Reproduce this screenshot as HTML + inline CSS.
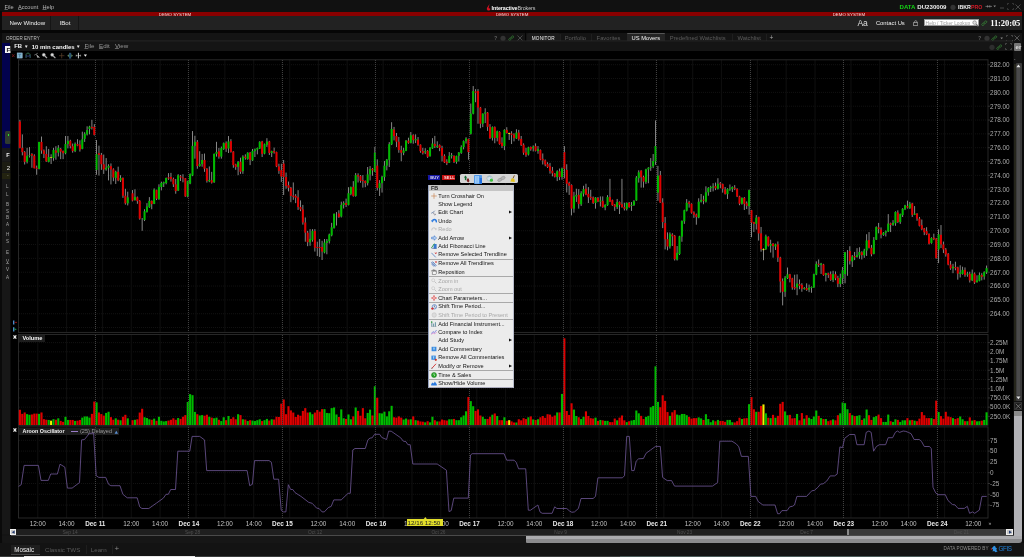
<!DOCTYPE html>
<html><head><meta charset="utf-8"><title>TWS</title>
<style>
*{box-sizing:border-box;margin:0;padding:0}
html,body{width:1024px;height:557px;overflow:hidden;background:#131313;font-family:"Liberation Sans",sans-serif;}
.a{position:absolute;white-space:nowrap}
#root{will-change:transform;position:relative;width:1024px;height:557px;overflow:hidden;background:#141414}
.t{position:absolute;white-space:nowrap;line-height:1;color:#ddd}
u{text-decoration:underline;text-underline-offset:0.4px;text-decoration-thickness:0.5px;text-decoration-color:rgba(200,200,200,0.45)}
.mi{position:absolute;left:0;width:100%;height:8.4px;font-size:5.58px;color:#111;line-height:8.4px;padding-left:9.4px;white-space:nowrap}
.mi.d{color:#a8a8a8}
.mi .ar{position:absolute;right:1px;top:0;font-size:4.2px;color:#111}
.sep{position:absolute;left:0;width:100%;height:0.9px;background:#a9a9a9}
.ic{position:absolute;left:2.3px;top:1.3px;width:6px;height:6px}
</style></head><body><div id="root">
<!-- top menu bar -->
<div class="a" style="left:0;top:0;width:1024px;height:11.7px;background:#111"></div>
<div class="t" style="left:4.5px;top:4.6px;font-size:5.6px;color:#b8b8b8"><u>F</u>ile</div>
<div class="t" style="left:18px;top:4.6px;font-size:5.6px;color:#b8b8b8"><u>A</u>ccount</div>
<div class="t" style="left:42.5px;top:4.6px;font-size:5.6px;color:#b8b8b8"><u>H</u>elp</div>
<!-- logo -->
<svg class="a" style="left:486px;top:3.6px" width="6" height="8" viewBox="0 0 6 8"><path d="M3.6 0 L1.2 3.4 Q0.2 5.2 1.4 6.2 Q2.6 7 3.8 6.2 Q4.8 5.2 4 4 L3 4.8 L2.6 3.6 Z" fill="#d81222"/></svg>
<div class="t" style="left:491.6px;top:5.8px;font-size:5.4px;color:#fff;letter-spacing:-0.1px"><b>Interactive</b><span style="color:#c8c8c8">Brokers</span></div>
<!-- right of menu -->
<div class="t" style="left:899.5px;top:4px;font-size:6.1px;color:#14d614;font-weight:bold">DATA</div>
<div class="t" style="left:917.3px;top:4px;font-size:6.1px;color:#f0f0f0;font-weight:bold">DU230009</div>
<svg class="a" style="left:950px;top:3.5px" width="6" height="6" viewBox="0 0 6 6"><circle cx="3" cy="3.3" r="2.6" fill="#333"/></svg>
<div class="t" style="left:958px;top:4.6px;font-size:5.3px;color:#f0f0f0;font-weight:bold">IBKR<span style="color:#d41a26">PRO</span></div>
<svg class="a" style="left:984.6px;top:4.2px" width="8" height="5" viewBox="0 0 8 5"><path d="M0.4 2.4 H7 M2.6 1.2 V3.6 M4.8 1.2 V3.6" stroke="#9a9a9a" stroke-width="0.6"/></svg>
<svg class="a" style="left:992.6px;top:5.4px" width="4" height="3" viewBox="0 0 4 3"><path d="M0.4 0.4 H3 L1.7 2.2 Z" fill="#888"/></svg>
<div class="a" style="left:1000px;top:7px;width:4px;height:2px;border:0.7px solid #2c2c2c"></div>
<svg class="a" style="left:1006.5px;top:3.3px" width="7" height="7" viewBox="0 0 7 7"><path d="M0.4 2 V0.4 H2 M5 0.4 H6.6 V2 M6.6 5 V6.6 H5 M2 6.6 H0.4 V5" stroke="#444" stroke-width="0.8" fill="none"/></svg>
<svg class="a" style="left:1015px;top:3.6px" width="6" height="6" viewBox="0 0 6 6"><path d="M0.5 0.5 L5.5 5.5 M5.5 0.5 L0.5 5.5" stroke="#555" stroke-width="0.8"/></svg>

<!-- red band -->
<div class="a" style="left:2px;top:11.6px;width:1020px;height:4.4px;background:#8a0000"></div>
<div class="t" style="left:158.8px;top:12.6px;font-size:4.4px;color:#f4dcdc;letter-spacing:0px">DEMO SYSTEM</div>
<div class="t" style="left:496px;top:12.6px;font-size:4.4px;color:#f4dcdc;letter-spacing:0px">DEMO SYSTEM</div>
<div class="t" style="left:832.7px;top:12.6px;font-size:4.4px;color:#f4dcdc;letter-spacing:0px">DEMO SYSTEM</div>

<!-- toolbar -->
<div class="a" style="left:2px;top:15.9px;width:1020.4px;height:14.2px;background:#222"></div>
<div class="a" style="left:50.4px;top:16.4px;width:0.9px;height:13.4px;background:#151515"></div>
<div class="a" style="left:78.2px;top:16.4px;width:0.9px;height:13.4px;background:#151515"></div>
<div class="t" style="left:9.5px;top:20.3px;font-size:6.1px;color:#eee">New Window</div>
<div class="t" style="left:59.6px;top:20.3px;font-size:6.1px;color:#eee">IBot</div>
<div class="t" style="left:857.6px;top:18.6px;font-size:8.6px;color:#ddd;letter-spacing:-0.3px">Aa</div>
<div class="t" style="left:875.9px;top:21px;font-size:5.85px;color:#eee">Contact Us</div>
<svg class="a" style="left:912.6px;top:19.6px" width="5.6" height="6.4" viewBox="0 0 7 8"><rect x="0.8" y="3.4" width="5.2" height="3.6" fill="none" stroke="#bbb" stroke-width="0.8"/><path d="M2 3.4 V2.2 A1.4 1.4 0 0 1 4.8 2.2 V3.4" fill="none" stroke="#bbb" stroke-width="0.8"/></svg>
<div class="a" style="left:924px;top:19.3px;width:55px;height:7px;background:#fff;border:0.6px solid #999"></div>
<div class="t" style="left:925.6px;top:21.5px;font-size:4.9px;color:#9a9a9a;letter-spacing:0px">Help / Ticker Lookup</div>
<svg class="a" style="left:972px;top:19.6px" width="7" height="7" viewBox="0 0 7 7"><circle cx="2.6" cy="2.6" r="1.8" fill="#ddd" stroke="#888" stroke-width="0.7"/><path d="M4 4 L6.3 6.3" stroke="#777" stroke-width="1.1"/></svg>
<svg class="a" style="left:981.3px;top:19.8px" width="6.6" height="6.6" viewBox="0 0 8 8"><g fill="none" stroke="#357c35" stroke-width="1"><rect x="0.8" y="4" width="3.4" height="2.4" rx="1.2" transform="rotate(-45 2.5 5.2)"/><rect x="3.8" y="1.4" width="3.4" height="2.4" rx="1.2" transform="rotate(-45 5.5 2.6)"/></g></svg>
<div class="t" style="left:990.2px;top:19px;font-size:8.55px;color:#fff;font-weight:bold;font-family:'Liberation Serif',serif;letter-spacing:-0.1px">11:20:05</div>

<div id="lblack" class="a" style="left:0;top:11.4px;width:1.7px;height:532px;background:#0a0a0a"></div>
<!-- gap -->
<div class="a" style="left:0;top:30.3px;width:1024px;height:2.5px;background:#060606"></div>

<!-- panel header row -->
<div class="a" style="left:2px;top:33px;width:522.6px;height:9px;background:#141414;border-radius:2px 2px 0 0"></div>
<div class="a" style="left:526px;top:33px;width:496px;height:9px;background:#141414;border-radius:2px 2px 0 0"></div>
<div class="t" style="left:6px;top:36.9px;font-size:4.5px;color:#c4c4c4;letter-spacing:0.1px">ORDER ENTRY</div>
<!-- left panel header icons -->
<div class="t" style="left:494.3px;top:36.6px;font-size:4.6px;color:#6a6a6a;font-weight:bold">?</div>
<svg class="a" style="left:500.4px;top:35px" width="6" height="6" viewBox="0 0 6 6"><circle cx="3" cy="3.3" r="2.6" fill="#333"/></svg>
<svg class="a" style="left:507.5px;top:35.2px" width="6.6" height="6.6" viewBox="0 0 8 8"><g fill="none" stroke="#357c35" stroke-width="0.95"><rect x="0.8" y="4" width="3.2" height="2.2" rx="1.1" transform="rotate(-45 2.4 5.1)"/><rect x="3.8" y="1.4" width="3.2" height="2.2" rx="1.1" transform="rotate(-45 5.4 2.5)"/></g></svg>
<svg class="a" style="left:517px;top:35px" width="6" height="6" viewBox="0 0 6 6"><path d="M0.5 0.5 L5.5 5.5 M5.5 0.5 L0.5 5.5" stroke="#6c6c6c" stroke-width="0.6"/></svg>
<div id="vgap" class="a" style="left:524.6px;top:30.3px;width:1.6px;height:11px;background:#040404"></div>
<!-- tabs -->
<div class="a" style="left:527px;top:33.2px;width:33px;height:8px;background:#1b1b1b;border-radius:2px 2px 0 0"></div>
<div class="t" style="left:531.8px;top:37.1px;font-size:4.7px;color:#f2f2f2;letter-spacing:0.14px">MONITOR</div>
<div class="a" style="left:560.3px;top:34px;width:0.7px;height:7px;background:#1f1f1f"></div>
<div class="t" style="left:564.7px;top:36.1px;font-size:5.8px;color:#5d5d5d">Portfolio</div>
<div class="a" style="left:591.3px;top:34px;width:0.7px;height:7px;background:#1f1f1f"></div>
<div class="t" style="left:596.6px;top:36.1px;font-size:5.8px;color:#5d5d5d">Favorites</div>
<div class="a" style="left:626.6px;top:32.6px;width:38.4px;height:8.6px;background:#242424;border-top:0.7px solid #555;border-radius:1px 1px 0 0"></div>
<div class="t" style="left:631.5px;top:36.1px;font-size:5.8px;color:#f4f4f4">US Movers</div>
<div class="t" style="left:669.8px;top:36.1px;font-size:5.8px;color:#5d5d5d">Predefined Watchlists</div>
<div class="a" style="left:731.6px;top:34px;width:0.7px;height:7px;background:#1f1f1f"></div>
<div class="t" style="left:737.5px;top:36.1px;font-size:5.8px;color:#5d5d5d">Watchlist</div>
<div class="a" style="left:766px;top:34px;width:0.7px;height:7px;background:#1f1f1f"></div>
<div class="t" style="left:769.6px;top:34.6px;font-size:6.6px;color:#aaa">+</div>
<!-- right panel header icons -->
<div class="t" style="left:978.2px;top:36.6px;font-size:4.6px;color:#6a6a6a;font-weight:bold">?</div>
<svg class="a" style="left:984.3px;top:35px" width="6" height="6" viewBox="0 0 6 6"><circle cx="3" cy="3.3" r="2.6" fill="#333"/></svg>
<svg class="a" style="left:991.4px;top:35.2px" width="6.6" height="6.6" viewBox="0 0 8 8"><g fill="none" stroke="#357c35" stroke-width="0.95"><rect x="0.8" y="4" width="3.2" height="2.2" rx="1.1" transform="rotate(-45 2.4 5.1)"/><rect x="3.8" y="1.4" width="3.2" height="2.2" rx="1.1" transform="rotate(-45 5.4 2.5)"/></g></svg>
<svg class="a" style="left:999.6px;top:37.2px" width="4" height="3" viewBox="0 0 4 3"><path d="M0.4 0.4 H3 L1.7 2.2 Z" fill="#888"/></svg>
<svg class="a" style="left:1005.5px;top:34.6px" width="7" height="7" viewBox="0 0 7 7"><path d="M0.4 2 V0.4 H2 M5 0.4 H6.6 V2 M6.6 5 V6.6 H5 M2 6.6 H0.4 V5" stroke="#555" stroke-width="0.8" fill="none"/></svg>
<svg class="a" style="left:1014px;top:35px" width="6" height="6" viewBox="0 0 6 6"><path d="M0.5 0.5 L5.5 5.5 M5.5 0.5 L0.5 5.5" stroke="#666" stroke-width="0.8"/></svg>

<!-- left blue strip & side fragments -->
<div class="a" style="left:2.2px;top:43.1px;width:8.3px;height:104.9px;background:#02024e"></div>
<div class="a" style="left:5px;top:45.6px;width:5.5px;height:7.7px;background:#f4f4f4"></div>
<div class="t" style="left:6.5px;top:46.6px;font-size:6.2px;color:#222;font-weight:bold">F</div>
<div class="a" style="left:4.6px;top:131px;width:6px;height:12.5px;background:#2f3b2f;border-radius:1.5px"></div>
<div class="a" style="left:7.8px;top:134.3px;width:1.7px;height:1.7px;background:#2ee02e"></div>
<div class="a" style="left:2px;top:148px;width:8.5px;height:386px;background:#171717"></div>
<div class="a" style="left:2px;top:149.6px;width:8.5px;height:11.2px;background:#1b1b1b"></div>
<div class="t" style="left:6.2px;top:152.6px;font-size:5.6px;color:#eee;font-weight:bold">F</div>
<div class="a" style="left:2px;top:162.2px;width:8.5px;height:10.3px;background:#1c1c12"></div>
<div class="t" style="left:6.8px;top:164.6px;font-size:6px;color:#eee">2</div>
<div class="a" style="left:2px;top:173px;width:8.5px;height:6px;background:#232310"></div>
<div class="t" style="left:7px;top:173.2px;font-size:5px;color:#887">-</div>
<div class="t" style="left:6px;top:185.2px;font-size:4.5px;color:#a4a4a4">L</div>
<div class="t" style="left:6px;top:192.7px;font-size:4.5px;color:#a4a4a4">L</div>
<div class="t" style="left:6px;top:202.7px;font-size:4.5px;color:#a4a4a4">B</div>
<div class="t" style="left:6px;top:209.7px;font-size:4.5px;color:#a4a4a4">S</div>
<div class="t" style="left:6px;top:216.2px;font-size:4.5px;color:#a4a4a4">B</div>
<div class="t" style="left:6px;top:223.2px;font-size:4.5px;color:#a4a4a4">A</div>
<div class="t" style="left:6px;top:232.7px;font-size:4.5px;color:#a4a4a4">H</div>
<div class="t" style="left:6px;top:239.7px;font-size:4.5px;color:#a4a4a4">S</div>
<div class="t" style="left:6px;top:250.7px;font-size:4.5px;color:#a4a4a4">E</div>
<div class="t" style="left:6px;top:260.2px;font-size:4.5px;color:#a4a4a4"><u>V</u></div>
<div class="t" style="left:6px;top:268.2px;font-size:4.5px;color:#a4a4a4">V</div>
<div class="t" style="left:6px;top:275.7px;font-size:4.5px;color:#a4a4a4">A</div>
<svg class="a" style="left:0;top:0" width="1024" height="557" viewBox="0 0 1024 557" shape-rendering="auto">
<rect x="10.5" y="41.5" width="1003" height="494.5" fill="#000"/>
<path d="M10.5 51 V43 Q10.5 41 12.5 41 H1011.5 Q1013.5 41 1013.5 43 V51 Z" fill="#151515"/>
<path d="M10.8 43.4 Q10.8 41 13 40.9 H1011 Q1013.2 41 1013.2 43.4" fill="none" stroke="#2a2a2a" stroke-width="0.8"/>
<g fill="none"><path d="M19 313.73 H988.0" stroke="#141414" stroke-width="0.9" stroke-dasharray="1 1"/><path d="M988.0 313.73 H989.8" stroke="#555" stroke-width="0.7"/><path d="M19 299.90 H988.0" stroke="#141414" stroke-width="0.9" stroke-dasharray="1 1"/><path d="M988.0 299.90 H989.8" stroke="#555" stroke-width="0.7"/><path d="M19 286.06 H988.0" stroke="#141414" stroke-width="0.9" stroke-dasharray="1 1"/><path d="M988.0 286.06 H989.8" stroke="#555" stroke-width="0.7"/><path d="M19 272.23 H988.0" stroke="#141414" stroke-width="0.9" stroke-dasharray="1 1"/><path d="M988.0 272.23 H989.8" stroke="#555" stroke-width="0.7"/><path d="M19 258.39 H988.0" stroke="#141414" stroke-width="0.9" stroke-dasharray="1 1"/><path d="M988.0 258.39 H989.8" stroke="#555" stroke-width="0.7"/><path d="M19 244.56 H988.0" stroke="#141414" stroke-width="0.9" stroke-dasharray="1 1"/><path d="M988.0 244.56 H989.8" stroke="#555" stroke-width="0.7"/><path d="M19 230.72 H988.0" stroke="#141414" stroke-width="0.9" stroke-dasharray="1 1"/><path d="M988.0 230.72 H989.8" stroke="#555" stroke-width="0.7"/><path d="M19 216.88 H988.0" stroke="#141414" stroke-width="0.9" stroke-dasharray="1 1"/><path d="M988.0 216.88 H989.8" stroke="#555" stroke-width="0.7"/><path d="M19 203.05 H988.0" stroke="#141414" stroke-width="0.9" stroke-dasharray="1 1"/><path d="M988.0 203.05 H989.8" stroke="#555" stroke-width="0.7"/><path d="M19 189.22 H988.0" stroke="#141414" stroke-width="0.9" stroke-dasharray="1 1"/><path d="M988.0 189.22 H989.8" stroke="#555" stroke-width="0.7"/><path d="M19 175.38 H988.0" stroke="#141414" stroke-width="0.9" stroke-dasharray="1 1"/><path d="M988.0 175.38 H989.8" stroke="#555" stroke-width="0.7"/><path d="M19 161.55 H988.0" stroke="#141414" stroke-width="0.9" stroke-dasharray="1 1"/><path d="M988.0 161.55 H989.8" stroke="#555" stroke-width="0.7"/><path d="M19 147.71 H988.0" stroke="#141414" stroke-width="0.9" stroke-dasharray="1 1"/><path d="M988.0 147.71 H989.8" stroke="#555" stroke-width="0.7"/><path d="M19 133.88 H988.0" stroke="#141414" stroke-width="0.9" stroke-dasharray="1 1"/><path d="M988.0 133.88 H989.8" stroke="#555" stroke-width="0.7"/><path d="M19 120.04 H988.0" stroke="#141414" stroke-width="0.9" stroke-dasharray="1 1"/><path d="M988.0 120.04 H989.8" stroke="#555" stroke-width="0.7"/><path d="M19 106.21 H988.0" stroke="#141414" stroke-width="0.9" stroke-dasharray="1 1"/><path d="M988.0 106.21 H989.8" stroke="#555" stroke-width="0.7"/><path d="M19 92.37 H988.0" stroke="#141414" stroke-width="0.9" stroke-dasharray="1 1"/><path d="M988.0 92.37 H989.8" stroke="#555" stroke-width="0.7"/><path d="M19 78.53 H988.0" stroke="#141414" stroke-width="0.9" stroke-dasharray="1 1"/><path d="M988.0 78.53 H989.8" stroke="#555" stroke-width="0.7"/><path d="M19 64.70 H988.0" stroke="#141414" stroke-width="0.9" stroke-dasharray="1 1"/><path d="M988.0 64.70 H989.8" stroke="#555" stroke-width="0.7"/><path d="M19 327.56 H988.0" stroke="#141414" stroke-width="0.9" stroke-dasharray="1 1"/><path d="M19 416.38 H988.0" stroke="#141414" stroke-width="0.9" stroke-dasharray="1 1"/><path d="M988.0 416.38 H989.8" stroke="#555" stroke-width="0.7"/><path d="M19 407.16 H988.0" stroke="#141414" stroke-width="0.9" stroke-dasharray="1 1"/><path d="M988.0 407.16 H989.8" stroke="#555" stroke-width="0.7"/><path d="M19 397.94 H988.0" stroke="#141414" stroke-width="0.9" stroke-dasharray="1 1"/><path d="M988.0 397.94 H989.8" stroke="#555" stroke-width="0.7"/><path d="M19 388.72 H988.0" stroke="#141414" stroke-width="0.9" stroke-dasharray="1 1"/><path d="M988.0 388.72 H989.8" stroke="#555" stroke-width="0.7"/><path d="M19 379.50 H988.0" stroke="#141414" stroke-width="0.9" stroke-dasharray="1 1"/><path d="M988.0 379.50 H989.8" stroke="#555" stroke-width="0.7"/><path d="M19 370.28 H988.0" stroke="#141414" stroke-width="0.9" stroke-dasharray="1 1"/><path d="M988.0 370.28 H989.8" stroke="#555" stroke-width="0.7"/><path d="M19 361.06 H988.0" stroke="#141414" stroke-width="0.9" stroke-dasharray="1 1"/><path d="M988.0 361.06 H989.8" stroke="#555" stroke-width="0.7"/><path d="M19 351.84 H988.0" stroke="#141414" stroke-width="0.9" stroke-dasharray="1 1"/><path d="M988.0 351.84 H989.8" stroke="#555" stroke-width="0.7"/><path d="M19 342.62 H988.0" stroke="#141414" stroke-width="0.9" stroke-dasharray="1 1"/><path d="M988.0 342.62 H989.8" stroke="#555" stroke-width="0.7"/><path d="M19 440.30 H988.0" stroke="#141414" stroke-width="0.9" stroke-dasharray="1 1"/><path d="M988.0 440.30 H989.8" stroke="#555" stroke-width="0.7"/><path d="M19 451.10 H988.0" stroke="#141414" stroke-width="0.9" stroke-dasharray="1 1"/><path d="M988.0 451.10 H989.8" stroke="#555" stroke-width="0.7"/><path d="M19 461.90 H988.0" stroke="#141414" stroke-width="0.9" stroke-dasharray="1 1"/><path d="M988.0 461.90 H989.8" stroke="#555" stroke-width="0.7"/><path d="M19 472.70 H988.0" stroke="#141414" stroke-width="0.9" stroke-dasharray="1 1"/><path d="M988.0 472.70 H989.8" stroke="#555" stroke-width="0.7"/><path d="M19 483.50 H988.0" stroke="#141414" stroke-width="0.9" stroke-dasharray="1 1"/><path d="M988.0 483.50 H989.8" stroke="#555" stroke-width="0.7"/><path d="M19 494.30 H988.0" stroke="#141414" stroke-width="0.9" stroke-dasharray="1 1"/><path d="M988.0 494.30 H989.8" stroke="#555" stroke-width="0.7"/><path d="M19 505.10 H988.0" stroke="#141414" stroke-width="0.9" stroke-dasharray="1 1"/><path d="M988.0 505.10 H989.8" stroke="#555" stroke-width="0.7"/><path d="M37.74 59.8 V332.4" stroke="#0d0d0d" stroke-width="1.2"/><path d="M66.54 59.8 V332.4" stroke="#0d0d0d" stroke-width="1.2"/><path d="M102.50 59.8 V332.4" stroke="#0d0d0d" stroke-width="1.2"/><path d="M131.30 59.8 V332.4" stroke="#0d0d0d" stroke-width="1.2"/><path d="M160.10 59.8 V332.4" stroke="#0d0d0d" stroke-width="1.2"/><path d="M196.06 59.8 V332.4" stroke="#0d0d0d" stroke-width="1.2"/><path d="M224.86 59.8 V332.4" stroke="#0d0d0d" stroke-width="1.2"/><path d="M253.66 59.8 V332.4" stroke="#0d0d0d" stroke-width="1.2"/><path d="M289.62 59.8 V332.4" stroke="#0d0d0d" stroke-width="1.2"/><path d="M318.42 59.8 V332.4" stroke="#0d0d0d" stroke-width="1.2"/><path d="M347.22 59.8 V332.4" stroke="#0d0d0d" stroke-width="1.2"/><path d="M383.18 59.8 V332.4" stroke="#0d0d0d" stroke-width="1.2"/><path d="M411.98 59.8 V332.4" stroke="#0d0d0d" stroke-width="1.2"/><path d="M440.78 59.8 V332.4" stroke="#0d0d0d" stroke-width="1.2"/><path d="M476.74 59.8 V332.4" stroke="#0d0d0d" stroke-width="1.2"/><path d="M505.54 59.8 V332.4" stroke="#0d0d0d" stroke-width="1.2"/><path d="M534.34 59.8 V332.4" stroke="#0d0d0d" stroke-width="1.2"/><path d="M570.30 59.8 V332.4" stroke="#0d0d0d" stroke-width="1.2"/><path d="M599.10 59.8 V332.4" stroke="#0d0d0d" stroke-width="1.2"/><path d="M627.90 59.8 V332.4" stroke="#0d0d0d" stroke-width="1.2"/><path d="M663.86 59.8 V332.4" stroke="#0d0d0d" stroke-width="1.2"/><path d="M692.66 59.8 V332.4" stroke="#0d0d0d" stroke-width="1.2"/><path d="M721.46 59.8 V332.4" stroke="#0d0d0d" stroke-width="1.2"/><path d="M757.42 59.8 V332.4" stroke="#0d0d0d" stroke-width="1.2"/><path d="M786.22 59.8 V332.4" stroke="#0d0d0d" stroke-width="1.2"/><path d="M815.02 59.8 V332.4" stroke="#0d0d0d" stroke-width="1.2"/><path d="M850.98 59.8 V332.4" stroke="#0d0d0d" stroke-width="1.2"/><path d="M879.78 59.8 V332.4" stroke="#0d0d0d" stroke-width="1.2"/><path d="M908.58 59.8 V332.4" stroke="#0d0d0d" stroke-width="1.2"/><path d="M944.54 59.8 V332.4" stroke="#0d0d0d" stroke-width="1.2"/><path d="M973.34 59.8 V332.4" stroke="#0d0d0d" stroke-width="1.2"/><rect x="18.5" y="59.8" width="969.5" height="272.6" fill="none" stroke="#2c2c2c" stroke-width="0.9"/><path d="M37.74 334.5 V425.3" stroke="#0d0d0d" stroke-width="1.2"/><path d="M66.54 334.5 V425.3" stroke="#0d0d0d" stroke-width="1.2"/><path d="M102.50 334.5 V425.3" stroke="#0d0d0d" stroke-width="1.2"/><path d="M131.30 334.5 V425.3" stroke="#0d0d0d" stroke-width="1.2"/><path d="M160.10 334.5 V425.3" stroke="#0d0d0d" stroke-width="1.2"/><path d="M196.06 334.5 V425.3" stroke="#0d0d0d" stroke-width="1.2"/><path d="M224.86 334.5 V425.3" stroke="#0d0d0d" stroke-width="1.2"/><path d="M253.66 334.5 V425.3" stroke="#0d0d0d" stroke-width="1.2"/><path d="M289.62 334.5 V425.3" stroke="#0d0d0d" stroke-width="1.2"/><path d="M318.42 334.5 V425.3" stroke="#0d0d0d" stroke-width="1.2"/><path d="M347.22 334.5 V425.3" stroke="#0d0d0d" stroke-width="1.2"/><path d="M383.18 334.5 V425.3" stroke="#0d0d0d" stroke-width="1.2"/><path d="M411.98 334.5 V425.3" stroke="#0d0d0d" stroke-width="1.2"/><path d="M440.78 334.5 V425.3" stroke="#0d0d0d" stroke-width="1.2"/><path d="M476.74 334.5 V425.3" stroke="#0d0d0d" stroke-width="1.2"/><path d="M505.54 334.5 V425.3" stroke="#0d0d0d" stroke-width="1.2"/><path d="M534.34 334.5 V425.3" stroke="#0d0d0d" stroke-width="1.2"/><path d="M570.30 334.5 V425.3" stroke="#0d0d0d" stroke-width="1.2"/><path d="M599.10 334.5 V425.3" stroke="#0d0d0d" stroke-width="1.2"/><path d="M627.90 334.5 V425.3" stroke="#0d0d0d" stroke-width="1.2"/><path d="M663.86 334.5 V425.3" stroke="#0d0d0d" stroke-width="1.2"/><path d="M692.66 334.5 V425.3" stroke="#0d0d0d" stroke-width="1.2"/><path d="M721.46 334.5 V425.3" stroke="#0d0d0d" stroke-width="1.2"/><path d="M757.42 334.5 V425.3" stroke="#0d0d0d" stroke-width="1.2"/><path d="M786.22 334.5 V425.3" stroke="#0d0d0d" stroke-width="1.2"/><path d="M815.02 334.5 V425.3" stroke="#0d0d0d" stroke-width="1.2"/><path d="M850.98 334.5 V425.3" stroke="#0d0d0d" stroke-width="1.2"/><path d="M879.78 334.5 V425.3" stroke="#0d0d0d" stroke-width="1.2"/><path d="M908.58 334.5 V425.3" stroke="#0d0d0d" stroke-width="1.2"/><path d="M944.54 334.5 V425.3" stroke="#0d0d0d" stroke-width="1.2"/><path d="M973.34 334.5 V425.3" stroke="#0d0d0d" stroke-width="1.2"/><rect x="18.5" y="334.5" width="969.5" height="90.8" fill="none" stroke="#2c2c2c" stroke-width="0.9"/><path d="M37.74 426.9 V518.0" stroke="#0d0d0d" stroke-width="1.2"/><path d="M66.54 426.9 V518.0" stroke="#0d0d0d" stroke-width="1.2"/><path d="M102.50 426.9 V518.0" stroke="#0d0d0d" stroke-width="1.2"/><path d="M131.30 426.9 V518.0" stroke="#0d0d0d" stroke-width="1.2"/><path d="M160.10 426.9 V518.0" stroke="#0d0d0d" stroke-width="1.2"/><path d="M196.06 426.9 V518.0" stroke="#0d0d0d" stroke-width="1.2"/><path d="M224.86 426.9 V518.0" stroke="#0d0d0d" stroke-width="1.2"/><path d="M253.66 426.9 V518.0" stroke="#0d0d0d" stroke-width="1.2"/><path d="M289.62 426.9 V518.0" stroke="#0d0d0d" stroke-width="1.2"/><path d="M318.42 426.9 V518.0" stroke="#0d0d0d" stroke-width="1.2"/><path d="M347.22 426.9 V518.0" stroke="#0d0d0d" stroke-width="1.2"/><path d="M383.18 426.9 V518.0" stroke="#0d0d0d" stroke-width="1.2"/><path d="M411.98 426.9 V518.0" stroke="#0d0d0d" stroke-width="1.2"/><path d="M440.78 426.9 V518.0" stroke="#0d0d0d" stroke-width="1.2"/><path d="M476.74 426.9 V518.0" stroke="#0d0d0d" stroke-width="1.2"/><path d="M505.54 426.9 V518.0" stroke="#0d0d0d" stroke-width="1.2"/><path d="M534.34 426.9 V518.0" stroke="#0d0d0d" stroke-width="1.2"/><path d="M570.30 426.9 V518.0" stroke="#0d0d0d" stroke-width="1.2"/><path d="M599.10 426.9 V518.0" stroke="#0d0d0d" stroke-width="1.2"/><path d="M627.90 426.9 V518.0" stroke="#0d0d0d" stroke-width="1.2"/><path d="M663.86 426.9 V518.0" stroke="#0d0d0d" stroke-width="1.2"/><path d="M692.66 426.9 V518.0" stroke="#0d0d0d" stroke-width="1.2"/><path d="M721.46 426.9 V518.0" stroke="#0d0d0d" stroke-width="1.2"/><path d="M757.42 426.9 V518.0" stroke="#0d0d0d" stroke-width="1.2"/><path d="M786.22 426.9 V518.0" stroke="#0d0d0d" stroke-width="1.2"/><path d="M815.02 426.9 V518.0" stroke="#0d0d0d" stroke-width="1.2"/><path d="M850.98 426.9 V518.0" stroke="#0d0d0d" stroke-width="1.2"/><path d="M879.78 426.9 V518.0" stroke="#0d0d0d" stroke-width="1.2"/><path d="M908.58 426.9 V518.0" stroke="#0d0d0d" stroke-width="1.2"/><path d="M944.54 426.9 V518.0" stroke="#0d0d0d" stroke-width="1.2"/><path d="M973.34 426.9 V518.0" stroke="#0d0d0d" stroke-width="1.2"/><rect x="18.5" y="426.9" width="969.5" height="91.1" fill="none" stroke="#2c2c2c" stroke-width="0.9"/></g>
</svg>
<!-- volume panel label -->
<svg class="a" style="left:11.5px;top:334.4px" width="6" height="6" viewBox="0 0 6 6"><path d="M1.5 1.4 L4.3 4.6 M4.3 1.4 L1.5 4.6" stroke="#eee" stroke-width="1.25"/></svg>
<div class="a" style="left:19.4px;top:335.2px;width:26px;height:7px;background:#1d1d1d"></div>
<div class="t" style="left:22.4px;top:336.2px;font-size:5.65px;color:#f4f4f4;font-weight:bold">Volume</div>

<!-- aroon label -->
<svg class="a" style="left:11.5px;top:427.4px" width="6" height="6" viewBox="0 0 6 6"><path d="M1.5 1.4 L4.3 4.6 M4.3 1.4 L1.5 4.6" stroke="#eee" stroke-width="1.25"/></svg>
<div class="a" style="left:19.4px;top:428.2px;width:99.3px;height:6.8px;background:#1d1d1d"></div>
<div class="t" style="left:22.6px;top:429.3px;font-size:5.35px;color:#f4f4f4;font-weight:bold">Aroon Oscillator</div>
<div class="a" style="left:67.5px;top:428.2px;width:51.2px;height:6.8px;background:#1d1d1d"></div>
<div class="a" style="left:71.4px;top:431.2px;width:6.6px;height:0.9px;background:#9a7cc8"></div>
<div class="t" style="left:80px;top:429.2px;font-size:5.6px;color:#999">(25) Delayed</div>
<svg class="a" style="left:114.4px;top:429.6px" width="5" height="5" viewBox="0 0 5 5"><path d="M2.3 0.8 L4 3.8 H0.6 Z" fill="#5a8fd0"/></svg>

<svg class="a" style="left:0;top:0" width="1024" height="557" viewBox="0 0 1024 557">
<g><rect x="19.45" y="119.84" width="0.9" height="28.53" fill="#949494"/><rect x="18.88" y="121.46" width="2.05" height="26.37" fill="#de0000"/><rect x="21.85" y="134.38" width="0.9" height="20.99" fill="#949494"/><rect x="21.27" y="147.83" width="2.05" height="4.31" fill="#de0000"/><rect x="24.25" y="151.06" width="0.9" height="13.46" fill="#949494"/><rect x="23.68" y="152.14" width="2.05" height="9.69" fill="#de0000"/><rect x="26.65" y="147.83" width="0.9" height="15.61" fill="#949494"/><rect x="26.07" y="155.90" width="2.05" height="5.92" fill="#00bb00"/><rect x="29.05" y="147.08" width="0.9" height="10.44" fill="#949494"/><rect x="28.48" y="155.04" width="2.05" height="0.70" fill="#00bb00"/><rect x="31.45" y="153.21" width="0.9" height="14.53" fill="#949494"/><rect x="30.88" y="153.97" width="2.05" height="1.72" fill="#de0000"/><rect x="33.85" y="154.29" width="0.9" height="13.99" fill="#949494"/><rect x="33.27" y="155.69" width="2.05" height="12.59" fill="#de0000"/><rect x="36.25" y="165.59" width="0.9" height="9.15" fill="#949494"/><rect x="35.68" y="167.74" width="2.05" height="1.08" fill="#de0000"/><rect x="38.65" y="141.91" width="0.9" height="27.45" fill="#949494"/><rect x="38.07" y="141.91" width="2.05" height="26.91" fill="#00bb00"/><rect x="41.05" y="136.53" width="0.9" height="17.22" fill="#949494"/><rect x="40.48" y="141.91" width="2.05" height="8.61" fill="#de0000"/><rect x="43.45" y="149.45" width="0.9" height="8.61" fill="#949494"/><rect x="42.88" y="150.52" width="2.05" height="3.44" fill="#de0000"/><rect x="45.85" y="146.22" width="0.9" height="15.61" fill="#949494"/><rect x="45.27" y="153.97" width="2.05" height="7.32" fill="#de0000"/><rect x="48.25" y="148.91" width="0.9" height="13.46" fill="#949494"/><rect x="47.67" y="156.98" width="2.05" height="4.84" fill="#00bb00"/><rect x="50.65" y="154.29" width="0.9" height="9.69" fill="#949494"/><rect x="50.07" y="157.20" width="2.05" height="0.70" fill="#f6ee00"/><rect x="53.05" y="147.83" width="0.9" height="12.92" fill="#949494"/><rect x="52.48" y="149.98" width="2.05" height="8.07" fill="#00bb00"/><rect x="55.45" y="146.22" width="0.9" height="13.46" fill="#949494"/><rect x="54.88" y="150.52" width="2.05" height="2.15" fill="#de0000"/><rect x="57.85" y="145.14" width="0.9" height="11.30" fill="#949494"/><rect x="57.27" y="147.83" width="2.05" height="4.84" fill="#00bb00"/><rect x="60.25" y="147.83" width="0.9" height="11.30" fill="#949494"/><rect x="59.67" y="148.91" width="2.05" height="2.69" fill="#de0000"/><rect x="62.65" y="150.52" width="0.9" height="8.61" fill="#949494"/><rect x="62.07" y="151.06" width="2.05" height="2.15" fill="#de0000"/><rect x="65.05" y="135.99" width="0.9" height="18.30" fill="#949494"/><rect x="64.47" y="144.06" width="2.05" height="9.15" fill="#00bb00"/><rect x="67.45" y="135.99" width="0.9" height="12.38" fill="#949494"/><rect x="66.88" y="140.83" width="2.05" height="3.23" fill="#00bb00"/><rect x="69.85" y="139.76" width="0.9" height="8.61" fill="#949494"/><rect x="69.27" y="140.83" width="2.05" height="5.38" fill="#de0000"/><rect x="72.25" y="143.53" width="0.9" height="9.15" fill="#949494"/><rect x="71.67" y="146.22" width="2.05" height="4.84" fill="#de0000"/><rect x="74.65" y="142.45" width="0.9" height="9.69" fill="#949494"/><rect x="74.07" y="143.85" width="2.05" height="7.21" fill="#00bb00"/><rect x="77.05" y="139.22" width="0.9" height="7.00" fill="#949494"/><rect x="76.47" y="144.06" width="2.05" height="1.61" fill="#de0000"/><rect x="79.45" y="140.30" width="0.9" height="11.30" fill="#949494"/><rect x="78.88" y="144.60" width="2.05" height="5.06" fill="#de0000"/><rect x="81.85" y="131.68" width="0.9" height="17.55" fill="#949494"/><rect x="81.27" y="139.22" width="2.05" height="9.69" fill="#00bb00"/><rect x="84.25" y="132.22" width="0.9" height="9.69" fill="#949494"/><rect x="83.67" y="133.84" width="2.05" height="5.06" fill="#00bb00"/><rect x="86.65" y="126.30" width="0.9" height="9.15" fill="#949494"/><rect x="86.07" y="130.07" width="2.05" height="4.31" fill="#00bb00"/><rect x="89.05" y="125.76" width="0.9" height="8.61" fill="#949494"/><rect x="88.47" y="126.63" width="2.05" height="2.37" fill="#00bb00"/><rect x="91.45" y="119.84" width="0.9" height="9.69" fill="#949494"/><rect x="90.88" y="126.84" width="2.05" height="1.08" fill="#de0000"/><rect x="93.85" y="124.15" width="0.9" height="11.30" fill="#949494"/><rect x="93.27" y="126.84" width="2.05" height="8.07" fill="#de0000"/><rect x="96.10" y="140.00" width="0.9" height="34.73" fill="#949494"/><rect x="95.52" y="154.22" width="2.05" height="15.67" fill="#00bb00"/><rect x="98.50" y="145.65" width="0.9" height="29.89" fill="#949494"/><rect x="97.92" y="153.25" width="2.05" height="1.62" fill="#de0000"/><rect x="100.90" y="152.92" width="0.9" height="16.96" fill="#949494"/><rect x="100.32" y="154.86" width="2.05" height="9.37" fill="#de0000"/><rect x="103.30" y="154.54" width="0.9" height="19.39" fill="#949494"/><rect x="102.72" y="164.23" width="2.05" height="5.17" fill="#de0000"/><rect x="105.70" y="158.09" width="0.9" height="12.60" fill="#949494"/><rect x="105.12" y="167.79" width="2.05" height="1.62" fill="#00bb00"/><rect x="108.10" y="164.23" width="0.9" height="16.16" fill="#949494"/><rect x="107.52" y="165.85" width="2.05" height="1.94" fill="#00bb00"/><rect x="110.50" y="163.42" width="0.9" height="21.00" fill="#949494"/><rect x="109.92" y="166.17" width="2.05" height="3.23" fill="#de0000"/><rect x="112.90" y="168.27" width="0.9" height="12.92" fill="#949494"/><rect x="112.32" y="169.40" width="2.05" height="8.08" fill="#de0000"/><rect x="115.30" y="170.69" width="0.9" height="13.25" fill="#949494"/><rect x="114.72" y="171.83" width="2.05" height="6.14" fill="#00bb00"/><rect x="117.70" y="166.66" width="0.9" height="14.54" fill="#949494"/><rect x="117.12" y="171.83" width="2.05" height="8.56" fill="#de0000"/><rect x="120.10" y="175.22" width="0.9" height="6.79" fill="#949494"/><rect x="119.52" y="177.96" width="2.05" height="2.42" fill="#00bb00"/><rect x="122.50" y="177.48" width="0.9" height="20.36" fill="#949494"/><rect x="121.92" y="177.96" width="2.05" height="17.77" fill="#de0000"/><rect x="124.90" y="188.79" width="0.9" height="15.83" fill="#949494"/><rect x="124.32" y="195.74" width="2.05" height="7.59" fill="#de0000"/><rect x="127.30" y="191.70" width="0.9" height="13.73" fill="#949494"/><rect x="126.72" y="197.35" width="2.05" height="5.98" fill="#00bb00"/><rect x="132.10" y="190.08" width="0.9" height="11.31" fill="#949494"/><rect x="131.53" y="193.31" width="2.05" height="7.27" fill="#de0000"/><rect x="134.50" y="189.27" width="0.9" height="11.31" fill="#949494"/><rect x="133.92" y="196.87" width="2.05" height="3.23" fill="#00bb00"/><rect x="136.90" y="196.54" width="0.9" height="7.27" fill="#949494"/><rect x="136.32" y="197.35" width="2.05" height="3.72" fill="#de0000"/><rect x="139.30" y="200.07" width="0.9" height="19.65" fill="#949494"/><rect x="138.72" y="200.87" width="2.05" height="17.77" fill="#de0000"/><rect x="141.70" y="217.97" width="0.9" height="12.79" fill="#949494"/><rect x="144.10" y="209.22" width="0.9" height="11.84" fill="#949494"/><rect x="143.53" y="211.24" width="2.05" height="8.75" fill="#00bb00"/><rect x="146.50" y="203.16" width="0.9" height="9.42" fill="#949494"/><rect x="145.92" y="206.53" width="2.05" height="5.38" fill="#00bb00"/><rect x="148.90" y="197.11" width="0.9" height="10.77" fill="#949494"/><rect x="148.32" y="200.87" width="2.05" height="6.33" fill="#00bb00"/><rect x="151.30" y="200.47" width="0.9" height="8.75" fill="#949494"/><rect x="150.72" y="200.87" width="2.05" height="3.23" fill="#de0000"/><rect x="153.70" y="188.36" width="0.9" height="15.75" fill="#949494"/><rect x="153.12" y="189.70" width="2.05" height="14.13" fill="#00bb00"/><rect x="156.10" y="189.70" width="0.9" height="10.36" fill="#949494"/><rect x="155.53" y="190.11" width="2.05" height="8.61" fill="#de0000"/><rect x="158.50" y="184.32" width="0.9" height="15.48" fill="#949494"/><rect x="157.92" y="187.01" width="2.05" height="12.11" fill="#00bb00"/><rect x="160.90" y="181.63" width="0.9" height="8.75" fill="#949494"/><rect x="160.32" y="182.97" width="2.05" height="4.04" fill="#00bb00"/><rect x="163.30" y="181.63" width="0.9" height="5.38" fill="#949494"/><rect x="162.72" y="182.30" width="2.05" height="1.35" fill="#00bb00"/><rect x="165.70" y="177.59" width="0.9" height="6.73" fill="#949494"/><rect x="165.12" y="177.99" width="2.05" height="4.98" fill="#00bb00"/><rect x="168.10" y="173.15" width="0.9" height="6.73" fill="#949494"/><rect x="167.53" y="177.32" width="2.05" height="1.21" fill="#de0000"/><rect x="170.50" y="172.88" width="0.9" height="8.75" fill="#949494"/><rect x="169.92" y="176.92" width="2.05" height="2.02" fill="#de0000"/><rect x="172.90" y="177.59" width="0.9" height="9.42" fill="#949494"/><rect x="172.32" y="178.94" width="2.05" height="5.38" fill="#de0000"/><rect x="175.30" y="178.94" width="0.9" height="14.80" fill="#949494"/><rect x="174.72" y="184.32" width="2.05" height="6.73" fill="#de0000"/><rect x="177.70" y="174.23" width="0.9" height="16.82" fill="#949494"/><rect x="177.12" y="175.30" width="2.05" height="15.34" fill="#00bb00"/><rect x="180.10" y="174.90" width="0.9" height="6.06" fill="#949494"/><rect x="179.53" y="176.24" width="2.05" height="1.35" fill="#de0000"/><rect x="182.50" y="174.23" width="0.9" height="8.08" fill="#949494"/><rect x="181.92" y="177.59" width="2.05" height="0.94" fill="#de0000"/><rect x="184.90" y="177.99" width="0.9" height="18.84" fill="#949494"/><rect x="184.32" y="178.26" width="2.05" height="18.17" fill="#de0000"/><rect x="187.30" y="180.69" width="0.9" height="16.69" fill="#949494"/><rect x="186.72" y="181.22" width="2.05" height="15.21" fill="#00bb00"/><rect x="189.66" y="173.45" width="0.9" height="10.77" fill="#949494"/><rect x="189.09" y="174.13" width="2.05" height="9.42" fill="#00bb00"/><rect x="192.06" y="131.06" width="0.9" height="45.09" fill="#949494"/><rect x="191.49" y="145.86" width="2.05" height="29.61" fill="#00bb00"/><rect x="194.46" y="135.77" width="0.9" height="22.88" fill="#949494"/><rect x="193.89" y="141.82" width="2.05" height="4.04" fill="#00bb00"/><rect x="196.86" y="140.07" width="0.9" height="28.67" fill="#949494"/><rect x="196.28" y="141.82" width="2.05" height="24.23" fill="#de0000"/><rect x="199.26" y="151.24" width="0.9" height="15.48" fill="#949494"/><rect x="198.69" y="164.03" width="2.05" height="2.02" fill="#00bb00"/><rect x="201.66" y="153.94" width="0.9" height="12.79" fill="#949494"/><rect x="201.09" y="159.99" width="2.05" height="4.04" fill="#00bb00"/><rect x="204.06" y="153.53" width="0.9" height="18.30" fill="#949494"/><rect x="203.49" y="159.99" width="2.05" height="8.75" fill="#de0000"/><rect x="206.46" y="168.07" width="0.9" height="14.54" fill="#949494"/><rect x="205.89" y="168.74" width="2.05" height="12.11" fill="#de0000"/><rect x="208.86" y="166.45" width="0.9" height="15.75" fill="#949494"/><rect x="208.28" y="179.91" width="2.05" height="1.35" fill="#00bb00"/><rect x="211.26" y="171.84" width="0.9" height="11.71" fill="#949494"/><rect x="210.69" y="180.18" width="2.05" height="2.42" fill="#de0000"/><rect x="213.66" y="153.53" width="0.9" height="29.34" fill="#949494"/><rect x="213.09" y="153.94" width="2.05" height="28.26" fill="#00bb00"/><rect x="216.06" y="141.82" width="0.9" height="14.80" fill="#949494"/><rect x="215.49" y="151.92" width="2.05" height="2.02" fill="#00bb00"/><rect x="218.46" y="147.88" width="0.9" height="10.77" fill="#949494"/><rect x="217.89" y="151.24" width="2.05" height="5.38" fill="#de0000"/><rect x="220.86" y="146.53" width="0.9" height="12.11" fill="#949494"/><rect x="220.28" y="148.15" width="2.05" height="8.48" fill="#00bb00"/><rect x="223.26" y="142.50" width="0.9" height="7.40" fill="#949494"/><rect x="222.69" y="143.17" width="2.05" height="5.79" fill="#00bb00"/><rect x="225.66" y="141.42" width="0.9" height="10.50" fill="#949494"/><rect x="225.09" y="143.17" width="2.05" height="5.38" fill="#de0000"/><rect x="228.06" y="136.04" width="0.9" height="16.96" fill="#949494"/><rect x="227.49" y="141.42" width="2.05" height="7.13" fill="#00bb00"/><rect x="230.46" y="139.13" width="0.9" height="13.46" fill="#949494"/><rect x="229.89" y="141.15" width="2.05" height="10.77" fill="#de0000"/><rect x="232.86" y="151.22" width="0.9" height="16.55" fill="#949494"/><rect x="232.28" y="151.63" width="2.05" height="13.46" fill="#de0000"/><rect x="235.26" y="163.74" width="0.9" height="6.06" fill="#949494"/><rect x="234.69" y="164.41" width="2.05" height="2.69" fill="#de0000"/><rect x="237.66" y="161.05" width="0.9" height="14.13" fill="#949494"/><rect x="237.09" y="161.99" width="2.05" height="4.85" fill="#00bb00"/><rect x="240.06" y="157.69" width="0.9" height="16.15" fill="#949494"/><rect x="239.49" y="161.72" width="2.05" height="10.09" fill="#de0000"/><rect x="242.46" y="155.26" width="0.9" height="18.57" fill="#949494"/><rect x="241.89" y="156.61" width="2.05" height="14.54" fill="#00bb00"/><rect x="244.86" y="154.32" width="0.9" height="5.38" fill="#949494"/><rect x="244.28" y="156.61" width="2.05" height="1.35" fill="#de0000"/><rect x="247.26" y="152.30" width="0.9" height="7.40" fill="#949494"/><rect x="246.69" y="152.71" width="2.05" height="6.33" fill="#00bb00"/><rect x="249.66" y="152.03" width="0.9" height="13.06" fill="#949494"/><rect x="249.09" y="152.71" width="2.05" height="7.40" fill="#de0000"/><rect x="252.06" y="148.94" width="0.9" height="12.11" fill="#949494"/><rect x="251.49" y="150.96" width="2.05" height="9.42" fill="#00bb00"/><rect x="254.46" y="148.53" width="0.9" height="8.48" fill="#949494"/><rect x="253.89" y="149.34" width="2.05" height="1.88" fill="#00bb00"/><rect x="256.86" y="147.59" width="0.9" height="6.73" fill="#949494"/><rect x="256.29" y="147.99" width="2.05" height="1.62" fill="#00bb00"/><rect x="259.26" y="141.27" width="0.9" height="7.67" fill="#949494"/><rect x="258.69" y="141.80" width="2.05" height="6.73" fill="#00bb00"/><rect x="261.66" y="140.86" width="0.9" height="16.15" fill="#949494"/><rect x="261.09" y="141.53" width="2.05" height="12.38" fill="#de0000"/><rect x="264.06" y="143.55" width="0.9" height="10.77" fill="#949494"/><rect x="263.49" y="144.23" width="2.05" height="9.42" fill="#00bb00"/><rect x="266.46" y="138.17" width="0.9" height="8.75" fill="#949494"/><rect x="265.89" y="141.53" width="2.05" height="3.36" fill="#00bb00"/><rect x="268.86" y="140.86" width="0.9" height="14.13" fill="#949494"/><rect x="268.29" y="141.53" width="2.05" height="11.44" fill="#de0000"/><rect x="271.26" y="150.69" width="0.9" height="6.33" fill="#949494"/><rect x="270.69" y="151.22" width="2.05" height="1.75" fill="#00bb00"/><rect x="273.66" y="147.59" width="0.9" height="6.06" fill="#949494"/><rect x="273.09" y="150.96" width="2.05" height="1.35" fill="#de0000"/><rect x="276.06" y="151.63" width="0.9" height="15.48" fill="#949494"/><rect x="275.49" y="152.03" width="2.05" height="14.40" fill="#de0000"/><rect x="278.46" y="163.74" width="0.9" height="10.09" fill="#949494"/><rect x="277.89" y="166.43" width="2.05" height="4.44" fill="#de0000"/><rect x="280.86" y="163.74" width="0.9" height="18.17" fill="#949494"/><rect x="280.29" y="170.07" width="2.05" height="6.46" fill="#de0000"/><rect x="283.22" y="160.00" width="0.9" height="35.01" fill="#949494"/><rect x="282.65" y="163.59" width="2.05" height="13.46" fill="#de0000"/><rect x="285.62" y="172.57" width="0.9" height="16.16" fill="#949494"/><rect x="285.05" y="177.06" width="2.05" height="8.98" fill="#de0000"/><rect x="288.02" y="181.54" width="0.9" height="9.87" fill="#949494"/><rect x="287.45" y="185.13" width="2.05" height="2.69" fill="#de0000"/><rect x="290.42" y="186.93" width="0.9" height="15.26" fill="#949494"/><rect x="289.85" y="187.83" width="2.05" height="8.08" fill="#de0000"/><rect x="292.82" y="182.44" width="0.9" height="17.41" fill="#949494"/><rect x="292.25" y="195.55" width="2.05" height="1.26" fill="#de0000"/><rect x="295.22" y="194.11" width="0.9" height="8.98" fill="#949494"/><rect x="294.65" y="195.91" width="2.05" height="1.80" fill="#de0000"/><rect x="297.62" y="190.16" width="0.9" height="19.75" fill="#949494"/><rect x="297.05" y="197.34" width="2.05" height="9.69" fill="#de0000"/><rect x="300.02" y="200.39" width="0.9" height="10.77" fill="#949494"/><rect x="299.45" y="207.04" width="2.05" height="2.33" fill="#de0000"/><rect x="302.42" y="204.88" width="0.9" height="19.75" fill="#949494"/><rect x="301.85" y="209.37" width="2.05" height="13.11" fill="#de0000"/><rect x="304.82" y="217.45" width="0.9" height="24.24" fill="#949494"/><rect x="304.25" y="222.48" width="2.05" height="10.23" fill="#de0000"/><rect x="307.22" y="230.92" width="0.9" height="15.26" fill="#949494"/><rect x="306.65" y="232.71" width="2.05" height="9.52" fill="#de0000"/><rect x="309.62" y="229.12" width="0.9" height="16.70" fill="#949494"/><rect x="309.05" y="238.99" width="2.05" height="3.23" fill="#00bb00"/><rect x="312.02" y="229.12" width="0.9" height="12.57" fill="#949494"/><rect x="311.45" y="230.92" width="2.05" height="8.98" fill="#00bb00"/><rect x="314.42" y="229.12" width="0.9" height="22.44" fill="#949494"/><rect x="313.85" y="230.92" width="2.05" height="16.70" fill="#de0000"/><rect x="316.82" y="241.69" width="0.9" height="14.36" fill="#949494"/><rect x="316.25" y="247.07" width="2.05" height="0.90" fill="#de0000"/><rect x="319.22" y="238.99" width="0.9" height="17.95" fill="#949494"/><rect x="318.65" y="247.07" width="2.05" height="0.90" fill="#de0000"/><rect x="321.62" y="240.79" width="0.9" height="19.21" fill="#949494"/><rect x="321.05" y="247.07" width="2.05" height="4.49" fill="#de0000"/><rect x="324.02" y="238.99" width="0.9" height="14.36" fill="#949494"/><rect x="323.45" y="242.59" width="2.05" height="9.87" fill="#00bb00"/><rect x="326.42" y="238.99" width="0.9" height="15.26" fill="#949494"/><rect x="325.85" y="240.79" width="2.05" height="2.15" fill="#00bb00"/><rect x="328.82" y="233.61" width="0.9" height="9.87" fill="#949494"/><rect x="328.25" y="234.51" width="2.05" height="6.64" fill="#00bb00"/><rect x="331.22" y="222.84" width="0.9" height="13.46" fill="#949494"/><rect x="330.65" y="227.32" width="2.05" height="8.08" fill="#00bb00"/><rect x="333.62" y="213.50" width="0.9" height="15.08" fill="#949494"/><rect x="333.05" y="213.86" width="2.05" height="14.00" fill="#00bb00"/><rect x="336.02" y="212.06" width="0.9" height="13.46" fill="#949494"/><rect x="338.42" y="210.27" width="0.9" height="7.54" fill="#949494"/><rect x="337.85" y="213.50" width="2.05" height="3.59" fill="#de0000"/><rect x="340.82" y="201.65" width="0.9" height="15.80" fill="#949494"/><rect x="340.25" y="204.88" width="2.05" height="11.67" fill="#00bb00"/><rect x="343.22" y="201.29" width="0.9" height="7.18" fill="#949494"/><rect x="342.65" y="203.09" width="2.05" height="1.80" fill="#00bb00"/><rect x="345.62" y="198.60" width="0.9" height="8.44" fill="#949494"/><rect x="345.05" y="203.09" width="2.05" height="1.80" fill="#de0000"/><rect x="348.02" y="187.20" width="0.9" height="18.17" fill="#949494"/><rect x="347.45" y="193.26" width="2.05" height="11.71" fill="#00bb00"/><rect x="350.42" y="186.53" width="0.9" height="8.75" fill="#949494"/><rect x="349.85" y="187.20" width="2.05" height="6.73" fill="#00bb00"/><rect x="352.82" y="181.14" width="0.9" height="15.48" fill="#949494"/><rect x="352.25" y="186.80" width="2.05" height="9.15" fill="#de0000"/><rect x="355.22" y="173.07" width="0.9" height="23.55" fill="#949494"/><rect x="354.65" y="175.09" width="2.05" height="20.86" fill="#00bb00"/><rect x="357.62" y="173.34" width="0.9" height="9.15" fill="#949494"/><rect x="357.05" y="175.09" width="2.05" height="1.35" fill="#de0000"/><rect x="360.02" y="175.09" width="0.9" height="7.67" fill="#949494"/><rect x="359.45" y="176.03" width="2.05" height="4.85" fill="#de0000"/><rect x="362.42" y="175.09" width="0.9" height="12.52" fill="#949494"/><rect x="361.85" y="180.07" width="2.05" height="1.08" fill="#de0000"/><rect x="364.82" y="180.47" width="0.9" height="6.73" fill="#949494"/><rect x="364.25" y="180.87" width="2.05" height="2.29" fill="#de0000"/><rect x="367.22" y="167.01" width="0.9" height="18.44" fill="#949494"/><rect x="366.65" y="174.41" width="2.05" height="8.75" fill="#00bb00"/><rect x="369.62" y="166.07" width="0.9" height="14.40" fill="#949494"/><rect x="369.05" y="169.03" width="2.05" height="5.38" fill="#00bb00"/><rect x="372.02" y="167.95" width="0.9" height="7.81" fill="#949494"/><rect x="371.45" y="168.76" width="2.05" height="1.62" fill="#de0000"/><rect x="374.42" y="146.82" width="0.9" height="25.17" fill="#949494"/><rect x="373.85" y="152.61" width="2.05" height="19.11" fill="#00bb00"/><rect x="376.78" y="159.34" width="0.9" height="31.22" fill="#949494"/><rect x="376.21" y="165.67" width="2.05" height="22.21" fill="#de0000"/><rect x="379.18" y="180.07" width="0.9" height="15.88" fill="#949494"/><rect x="378.61" y="183.16" width="2.05" height="4.98" fill="#00bb00"/><rect x="381.58" y="175.76" width="0.9" height="16.82" fill="#949494"/><rect x="381.01" y="176.84" width="2.05" height="6.33" fill="#00bb00"/><rect x="383.98" y="160.96" width="0.9" height="19.92" fill="#949494"/><rect x="383.41" y="165.67" width="2.05" height="11.44" fill="#00bb00"/><rect x="386.38" y="158.94" width="0.9" height="11.44" fill="#949494"/><rect x="385.81" y="159.61" width="2.05" height="6.06" fill="#00bb00"/><rect x="388.78" y="142.11" width="0.9" height="24.90" fill="#949494"/><rect x="388.21" y="144.13" width="2.05" height="15.75" fill="#00bb00"/><rect x="391.18" y="122.21" width="0.9" height="22.88" fill="#949494"/><rect x="390.61" y="128.94" width="2.05" height="15.48" fill="#00bb00"/><rect x="393.58" y="126.92" width="0.9" height="13.46" fill="#949494"/><rect x="393.01" y="129.61" width="2.05" height="6.46" fill="#de0000"/><rect x="395.98" y="132.97" width="0.9" height="14.13" fill="#949494"/><rect x="395.41" y="136.07" width="2.05" height="5.65" fill="#de0000"/><rect x="398.38" y="137.01" width="0.9" height="15.75" fill="#949494"/><rect x="397.81" y="141.72" width="2.05" height="8.34" fill="#de0000"/><rect x="400.78" y="145.76" width="0.9" height="15.48" fill="#949494"/><rect x="400.21" y="150.07" width="2.05" height="2.69" fill="#de0000"/><rect x="403.18" y="147.78" width="0.9" height="7.40" fill="#949494"/><rect x="402.61" y="150.47" width="2.05" height="2.29" fill="#00bb00"/><rect x="405.58" y="140.11" width="0.9" height="11.04" fill="#949494"/><rect x="405.01" y="140.65" width="2.05" height="10.23" fill="#00bb00"/><rect x="407.98" y="137.69" width="0.9" height="6.06" fill="#949494"/><rect x="407.41" y="140.65" width="2.05" height="2.15" fill="#de0000"/><rect x="410.38" y="132.03" width="0.9" height="11.31" fill="#949494"/><rect x="409.81" y="135.26" width="2.05" height="7.54" fill="#00bb00"/><rect x="412.78" y="134.32" width="0.9" height="9.42" fill="#949494"/><rect x="412.21" y="135.26" width="2.05" height="4.85" fill="#de0000"/><rect x="415.18" y="134.32" width="0.9" height="8.75" fill="#949494"/><rect x="414.61" y="139.03" width="2.05" height="1.35" fill="#00bb00"/><rect x="417.58" y="137.01" width="0.9" height="8.75" fill="#949494"/><rect x="417.01" y="139.70" width="2.05" height="4.98" fill="#de0000"/><rect x="419.98" y="144.41" width="0.9" height="8.34" fill="#949494"/><rect x="419.41" y="144.68" width="2.05" height="6.46" fill="#de0000"/><rect x="422.38" y="147.78" width="0.9" height="6.73" fill="#949494"/><rect x="421.81" y="151.14" width="2.05" height="2.02" fill="#de0000"/><rect x="424.78" y="148.18" width="0.9" height="5.92" fill="#949494"/><rect x="424.21" y="151.14" width="2.05" height="1.35" fill="#00bb00"/><rect x="427.18" y="150.07" width="0.9" height="7.81" fill="#949494"/><rect x="426.61" y="150.87" width="2.05" height="5.92" fill="#de0000"/><rect x="429.58" y="147.11" width="0.9" height="9.42" fill="#949494"/><rect x="429.01" y="147.78" width="2.05" height="8.48" fill="#00bb00"/><rect x="431.98" y="138.14" width="0.9" height="10.77" fill="#949494"/><rect x="431.41" y="143.53" width="2.05" height="4.94" fill="#00bb00"/><rect x="434.38" y="135.90" width="0.9" height="12.12" fill="#949494"/><rect x="433.81" y="143.98" width="2.05" height="2.24" fill="#de0000"/><rect x="436.78" y="141.28" width="0.9" height="6.73" fill="#949494"/><rect x="436.21" y="145.77" width="2.05" height="1.35" fill="#00bb00"/><rect x="439.18" y="144.43" width="0.9" height="6.73" fill="#949494"/><rect x="438.61" y="145.05" width="2.05" height="2.96" fill="#de0000"/><rect x="441.58" y="145.77" width="0.9" height="15.71" fill="#949494"/><rect x="441.01" y="148.02" width="2.05" height="7.81" fill="#de0000"/><rect x="443.98" y="154.30" width="0.9" height="8.71" fill="#949494"/><rect x="443.41" y="155.83" width="2.05" height="6.55" fill="#de0000"/><rect x="446.38" y="159.24" width="0.9" height="5.83" fill="#949494"/><rect x="445.81" y="161.75" width="2.05" height="1.53" fill="#de0000"/><rect x="448.78" y="152.06" width="0.9" height="10.95" fill="#949494"/><rect x="448.21" y="155.83" width="2.05" height="7.00" fill="#00bb00"/><rect x="451.18" y="152.95" width="0.9" height="5.57" fill="#949494"/><rect x="450.61" y="155.20" width="2.05" height="0.90" fill="#00bb00"/><rect x="453.58" y="155.47" width="0.9" height="7.54" fill="#949494"/><rect x="453.01" y="155.83" width="2.05" height="6.10" fill="#de0000"/><rect x="455.98" y="155.65" width="0.9" height="8.08" fill="#949494"/><rect x="455.41" y="156.10" width="2.05" height="5.83" fill="#00bb00"/><rect x="458.38" y="152.06" width="0.9" height="9.43" fill="#949494"/><rect x="457.81" y="152.50" width="2.05" height="3.32" fill="#00bb00"/><rect x="460.78" y="145.32" width="0.9" height="8.53" fill="#949494"/><rect x="460.21" y="147.12" width="2.05" height="5.83" fill="#00bb00"/><rect x="463.18" y="140.39" width="0.9" height="8.98" fill="#949494"/><rect x="462.61" y="141.10" width="2.05" height="6.01" fill="#00bb00"/><rect x="465.58" y="137.24" width="0.9" height="6.28" fill="#949494"/><rect x="465.01" y="138.59" width="2.05" height="2.51" fill="#00bb00"/><rect x="467.98" y="138.59" width="0.9" height="21.10" fill="#949494"/><rect x="467.41" y="139.04" width="2.05" height="13.02" fill="#de0000"/><rect x="470.34" y="103.55" width="0.9" height="30.96" fill="#949494"/><rect x="469.77" y="113.65" width="2.05" height="20.19" fill="#00bb00"/><rect x="472.74" y="86.06" width="0.9" height="28.26" fill="#949494"/><rect x="472.17" y="91.04" width="2.05" height="22.61" fill="#00bb00"/><rect x="475.14" y="89.15" width="0.9" height="13.06" fill="#949494"/><rect x="474.57" y="91.44" width="2.05" height="1.35" fill="#de0000"/><rect x="477.54" y="89.15" width="0.9" height="34.59" fill="#949494"/><rect x="476.97" y="91.04" width="2.05" height="16.55" fill="#de0000"/><rect x="479.94" y="106.92" width="0.9" height="21.27" fill="#949494"/><rect x="479.37" y="107.59" width="2.05" height="16.15" fill="#de0000"/><rect x="482.34" y="113.38" width="0.9" height="13.73" fill="#949494"/><rect x="481.77" y="113.65" width="2.05" height="10.09" fill="#00bb00"/><rect x="484.74" y="108.26" width="0.9" height="14.80" fill="#949494"/><rect x="484.17" y="112.30" width="2.05" height="1.35" fill="#00bb00"/><rect x="487.14" y="112.03" width="0.9" height="18.84" fill="#949494"/><rect x="486.57" y="112.57" width="2.05" height="14.27" fill="#de0000"/><rect x="489.54" y="124.15" width="0.9" height="14.80" fill="#949494"/><rect x="488.97" y="126.84" width="2.05" height="11.31" fill="#de0000"/><rect x="491.94" y="126.43" width="0.9" height="14.13" fill="#949494"/><rect x="491.37" y="127.11" width="2.05" height="10.77" fill="#00bb00"/><rect x="494.34" y="126.43" width="0.9" height="16.82" fill="#949494"/><rect x="493.77" y="127.11" width="2.05" height="10.77" fill="#de0000"/><rect x="496.74" y="130.57" width="0.9" height="10.77" fill="#949494"/><rect x="496.17" y="131.24" width="2.05" height="6.73" fill="#00bb00"/><rect x="499.14" y="131.24" width="0.9" height="13.46" fill="#949494"/><rect x="498.57" y="131.92" width="2.05" height="12.11" fill="#de0000"/><rect x="501.54" y="137.30" width="0.9" height="10.77" fill="#949494"/><rect x="500.97" y="142.69" width="2.05" height="3.36" fill="#de0000"/><rect x="503.94" y="129.23" width="0.9" height="20.86" fill="#949494"/><rect x="503.37" y="129.90" width="2.05" height="16.15" fill="#00bb00"/><rect x="506.34" y="127.21" width="0.9" height="6.33" fill="#949494"/><rect x="505.77" y="129.90" width="2.05" height="3.10" fill="#de0000"/><rect x="508.74" y="132.59" width="0.9" height="7.40" fill="#949494"/><rect x="508.17" y="132.99" width="2.05" height="0.94" fill="#f6ee00"/><rect x="511.14" y="131.24" width="0.9" height="12.79" fill="#949494"/><rect x="510.57" y="133.53" width="2.05" height="1.35" fill="#de0000"/><rect x="513.54" y="133.26" width="0.9" height="8.08" fill="#949494"/><rect x="512.97" y="134.61" width="2.05" height="3.36" fill="#de0000"/><rect x="515.94" y="129.23" width="0.9" height="9.69" fill="#949494"/><rect x="515.37" y="132.59" width="2.05" height="5.79" fill="#00bb00"/><rect x="518.34" y="129.90" width="0.9" height="10.77" fill="#949494"/><rect x="517.76" y="132.59" width="2.05" height="6.73" fill="#de0000"/><rect x="520.74" y="135.96" width="0.9" height="10.09" fill="#949494"/><rect x="520.17" y="138.92" width="2.05" height="6.19" fill="#de0000"/><rect x="523.14" y="143.36" width="0.9" height="11.44" fill="#949494"/><rect x="522.57" y="144.70" width="2.05" height="8.08" fill="#de0000"/><rect x="525.54" y="147.80" width="0.9" height="9.02" fill="#949494"/><rect x="524.97" y="152.38" width="2.05" height="2.69" fill="#de0000"/><rect x="527.94" y="146.72" width="0.9" height="8.75" fill="#949494"/><rect x="527.37" y="147.40" width="2.05" height="7.13" fill="#00bb00"/><rect x="530.34" y="146.45" width="0.9" height="4.31" fill="#949494"/><rect x="529.76" y="146.99" width="2.05" height="2.42" fill="#de0000"/><rect x="532.74" y="145.38" width="0.9" height="6.06" fill="#949494"/><rect x="532.17" y="146.72" width="2.05" height="1.62" fill="#00bb00"/><rect x="535.14" y="143.36" width="0.9" height="8.08" fill="#949494"/><rect x="534.57" y="146.05" width="2.05" height="4.71" fill="#de0000"/><rect x="537.54" y="146.05" width="0.9" height="7.67" fill="#949494"/><rect x="536.97" y="149.15" width="2.05" height="1.88" fill="#00bb00"/><rect x="539.94" y="149.42" width="0.9" height="10.77" fill="#949494"/><rect x="539.37" y="150.09" width="2.05" height="9.42" fill="#de0000"/><rect x="542.34" y="153.46" width="0.9" height="11.04" fill="#949494"/><rect x="541.76" y="158.84" width="2.05" height="1.62" fill="#de0000"/><rect x="544.74" y="159.52" width="0.9" height="6.73" fill="#949494"/><rect x="544.17" y="160.46" width="2.05" height="4.04" fill="#de0000"/><rect x="547.14" y="162.21" width="0.9" height="5.79" fill="#949494"/><rect x="546.57" y="163.96" width="2.05" height="2.96" fill="#de0000"/><rect x="549.54" y="162.88" width="0.9" height="10.77" fill="#949494"/><rect x="548.97" y="166.24" width="2.05" height="4.71" fill="#de0000"/><rect x="551.94" y="166.92" width="0.9" height="9.42" fill="#949494"/><rect x="551.37" y="170.69" width="2.05" height="2.69" fill="#de0000"/><rect x="554.34" y="172.97" width="0.9" height="4.44" fill="#949494"/><rect x="553.76" y="173.65" width="2.05" height="2.96" fill="#de0000"/><rect x="556.74" y="170.28" width="0.9" height="10.77" fill="#949494"/><rect x="556.17" y="171.22" width="2.05" height="5.79" fill="#00bb00"/><rect x="559.14" y="168.53" width="0.9" height="11.57" fill="#949494"/><rect x="558.57" y="171.22" width="2.05" height="5.79" fill="#de0000"/><rect x="561.54" y="167.59" width="0.9" height="12.11" fill="#949494"/><rect x="560.97" y="168.53" width="2.05" height="8.48" fill="#00bb00"/><rect x="563.90" y="146.06" width="0.9" height="32.30" fill="#949494"/><rect x="563.33" y="152.11" width="2.05" height="16.82" fill="#de0000"/><rect x="566.30" y="164.23" width="0.9" height="28.26" fill="#949494"/><rect x="565.73" y="169.88" width="2.05" height="13.86" fill="#de0000"/><rect x="568.70" y="181.72" width="0.9" height="13.19" fill="#949494"/><rect x="568.12" y="183.07" width="2.05" height="2.69" fill="#de0000"/><rect x="571.10" y="184.41" width="0.9" height="30.96" fill="#949494"/><rect x="570.53" y="185.09" width="2.05" height="23.55" fill="#de0000"/><rect x="573.50" y="191.82" width="0.9" height="20.86" fill="#949494"/><rect x="572.93" y="196.26" width="2.05" height="12.38" fill="#00bb00"/><rect x="575.90" y="188.72" width="0.9" height="13.19" fill="#949494"/><rect x="575.33" y="194.91" width="2.05" height="1.62" fill="#00bb00"/><rect x="578.30" y="189.13" width="0.9" height="19.52" fill="#949494"/><rect x="577.73" y="194.91" width="2.05" height="9.02" fill="#de0000"/><rect x="580.70" y="191.14" width="0.9" height="14.80" fill="#949494"/><rect x="580.12" y="193.16" width="2.05" height="11.17" fill="#00bb00"/><rect x="583.10" y="185.76" width="0.9" height="10.77" fill="#949494"/><rect x="582.53" y="189.13" width="2.05" height="4.44" fill="#00bb00"/><rect x="585.50" y="183.74" width="0.9" height="11.44" fill="#949494"/><rect x="584.93" y="188.72" width="2.05" height="5.79" fill="#de0000"/><rect x="587.90" y="187.11" width="0.9" height="15.88" fill="#949494"/><rect x="587.33" y="193.84" width="2.05" height="3.36" fill="#de0000"/><rect x="590.30" y="189.80" width="0.9" height="10.09" fill="#949494"/><rect x="589.73" y="196.80" width="2.05" height="1.08" fill="#de0000"/><rect x="592.70" y="196.53" width="0.9" height="7.40" fill="#949494"/><rect x="592.12" y="197.60" width="2.05" height="5.38" fill="#de0000"/><rect x="595.10" y="197.20" width="0.9" height="11.44" fill="#949494"/><rect x="594.53" y="197.60" width="2.05" height="5.38" fill="#00bb00"/><rect x="597.50" y="197.05" width="0.9" height="5.03" fill="#949494"/><rect x="596.93" y="197.93" width="2.05" height="3.52" fill="#de0000"/><rect x="599.90" y="196.42" width="0.9" height="10.05" fill="#949494"/><rect x="599.33" y="200.44" width="2.05" height="1.26" fill="#00bb00"/><rect x="602.30" y="196.42" width="0.9" height="11.31" fill="#949494"/><rect x="601.73" y="200.82" width="2.05" height="6.28" fill="#de0000"/><rect x="604.70" y="204.21" width="0.9" height="6.03" fill="#949494"/><rect x="604.12" y="204.96" width="2.05" height="2.51" fill="#00bb00"/><rect x="607.10" y="195.16" width="0.9" height="10.68" fill="#949494"/><rect x="606.53" y="197.05" width="2.05" height="8.17" fill="#00bb00"/><rect x="609.50" y="178.82" width="0.9" height="23.25" fill="#949494"/><rect x="608.93" y="197.05" width="2.05" height="4.40" fill="#de0000"/><rect x="611.90" y="199.56" width="0.9" height="6.28" fill="#949494"/><rect x="611.33" y="200.19" width="2.05" height="5.03" fill="#de0000"/><rect x="614.30" y="203.96" width="0.9" height="6.91" fill="#949494"/><rect x="613.73" y="204.59" width="2.05" height="2.14" fill="#de0000"/><rect x="616.70" y="198.93" width="0.9" height="10.05" fill="#949494"/><rect x="616.12" y="202.07" width="2.05" height="5.03" fill="#00bb00"/><rect x="619.10" y="201.45" width="0.9" height="12.57" fill="#949494"/><rect x="618.53" y="202.07" width="2.05" height="2.89" fill="#de0000"/><rect x="621.50" y="178.82" width="0.9" height="28.91" fill="#949494"/><rect x="620.93" y="204.21" width="2.05" height="2.89" fill="#de0000"/><rect x="623.90" y="202.70" width="0.9" height="7.79" fill="#949494"/><rect x="623.33" y="207.10" width="2.05" height="1.63" fill="#de0000"/><rect x="626.30" y="202.45" width="0.9" height="8.04" fill="#949494"/><rect x="625.73" y="202.95" width="2.05" height="6.03" fill="#00bb00"/><rect x="628.70" y="202.07" width="0.9" height="5.66" fill="#949494"/><rect x="628.12" y="202.70" width="2.05" height="4.40" fill="#de0000"/><rect x="631.10" y="202.07" width="0.9" height="8.80" fill="#949494"/><rect x="630.53" y="204.96" width="2.05" height="0.88" fill="#00bb00"/><rect x="633.50" y="200.19" width="0.9" height="5.66" fill="#949494"/><rect x="632.93" y="201.19" width="2.05" height="4.02" fill="#00bb00"/><rect x="635.90" y="176.06" width="0.9" height="24.76" fill="#949494"/><rect x="635.33" y="177.57" width="2.05" height="22.87" fill="#00bb00"/><rect x="638.30" y="170.28" width="0.9" height="12.32" fill="#949494"/><rect x="637.73" y="172.29" width="2.05" height="5.91" fill="#00bb00"/><rect x="640.70" y="170.28" width="0.9" height="17.34" fill="#949494"/><rect x="640.12" y="170.66" width="2.05" height="6.66" fill="#de0000"/><rect x="643.10" y="175.68" width="0.9" height="11.94" fill="#949494"/><rect x="642.53" y="176.94" width="2.05" height="4.65" fill="#de0000"/><rect x="645.50" y="168.77" width="0.9" height="15.08" fill="#949494"/><rect x="644.93" y="169.40" width="2.05" height="12.57" fill="#00bb00"/><rect x="647.90" y="167.26" width="0.9" height="15.96" fill="#949494"/><rect x="647.33" y="167.76" width="2.05" height="1.63" fill="#00bb00"/><rect x="650.30" y="158.07" width="0.9" height="12.79" fill="#949494"/><rect x="649.73" y="166.82" width="2.05" height="0.94" fill="#00bb00"/><rect x="652.70" y="154.03" width="0.9" height="14.13" fill="#949494"/><rect x="652.12" y="161.03" width="2.05" height="5.38" fill="#00bb00"/><rect x="655.10" y="120.38" width="0.9" height="44.41" fill="#949494"/><rect x="654.53" y="145.96" width="2.05" height="15.48" fill="#00bb00"/><rect x="657.46" y="165.85" width="0.9" height="34.97" fill="#949494"/><rect x="656.88" y="175.57" width="2.05" height="17.06" fill="#00bb00"/><rect x="659.86" y="170.97" width="0.9" height="31.89" fill="#949494"/><rect x="659.28" y="175.23" width="2.05" height="27.29" fill="#de0000"/><rect x="662.26" y="198.26" width="0.9" height="29.85" fill="#949494"/><rect x="661.68" y="202.52" width="2.05" height="19.61" fill="#de0000"/><rect x="664.66" y="217.02" width="0.9" height="32.41" fill="#949494"/><rect x="664.09" y="222.99" width="2.05" height="16.20" fill="#de0000"/><rect x="667.06" y="232.37" width="0.9" height="17.91" fill="#949494"/><rect x="666.49" y="239.19" width="2.05" height="7.33" fill="#de0000"/><rect x="669.46" y="232.37" width="0.9" height="16.20" fill="#949494"/><rect x="668.88" y="234.08" width="2.05" height="12.45" fill="#00bb00"/><rect x="671.86" y="233.22" width="0.9" height="12.79" fill="#949494"/><rect x="671.28" y="234.59" width="2.05" height="1.71" fill="#de0000"/><rect x="674.26" y="234.93" width="0.9" height="25.58" fill="#949494"/><rect x="673.68" y="235.78" width="2.05" height="23.37" fill="#de0000"/><rect x="676.66" y="246.02" width="0.9" height="14.50" fill="#949494"/><rect x="676.09" y="252.84" width="2.05" height="6.82" fill="#00bb00"/><rect x="679.06" y="235.78" width="0.9" height="19.27" fill="#949494"/><rect x="678.49" y="236.29" width="2.05" height="17.74" fill="#00bb00"/><rect x="681.46" y="220.43" width="0.9" height="21.32" fill="#949494"/><rect x="680.88" y="220.94" width="2.05" height="15.69" fill="#00bb00"/><rect x="683.86" y="209.69" width="0.9" height="14.16" fill="#949494"/><rect x="683.28" y="210.20" width="2.05" height="11.09" fill="#00bb00"/><rect x="686.26" y="199.11" width="0.9" height="12.28" fill="#949494"/><rect x="685.68" y="202.86" width="2.05" height="7.85" fill="#00bb00"/><rect x="688.66" y="200.82" width="0.9" height="6.82" fill="#949494"/><rect x="688.09" y="202.18" width="2.05" height="1.71" fill="#de0000"/><rect x="691.06" y="203.38" width="0.9" height="10.23" fill="#949494"/><rect x="690.49" y="203.89" width="2.05" height="8.87" fill="#de0000"/><rect x="693.46" y="211.39" width="0.9" height="6.48" fill="#949494"/><rect x="692.88" y="212.42" width="2.05" height="2.39" fill="#de0000"/><rect x="695.86" y="213.61" width="0.9" height="11.09" fill="#949494"/><rect x="695.28" y="214.46" width="2.05" height="2.56" fill="#de0000"/><rect x="698.26" y="198.26" width="0.9" height="19.96" fill="#949494"/><rect x="697.68" y="201.67" width="2.05" height="15.86" fill="#00bb00"/><rect x="700.66" y="194.00" width="0.9" height="8.53" fill="#949494"/><rect x="700.09" y="199.97" width="2.05" height="1.71" fill="#00bb00"/><rect x="703.06" y="195.70" width="0.9" height="8.53" fill="#949494"/><rect x="702.49" y="199.62" width="2.05" height="1.19" fill="#de0000"/><rect x="705.46" y="186.32" width="0.9" height="16.20" fill="#949494"/><rect x="704.88" y="192.29" width="2.05" height="9.38" fill="#00bb00"/><rect x="707.86" y="187.17" width="0.9" height="8.53" fill="#949494"/><rect x="707.28" y="188.03" width="2.05" height="4.26" fill="#00bb00"/><rect x="710.26" y="185.74" width="0.9" height="6.28" fill="#949494"/><rect x="709.68" y="186.99" width="2.05" height="1.26" fill="#00bb00"/><rect x="712.66" y="183.22" width="0.9" height="8.17" fill="#949494"/><rect x="712.09" y="186.36" width="2.05" height="1.01" fill="#00bb00"/><rect x="715.06" y="182.59" width="0.9" height="7.54" fill="#949494"/><rect x="714.49" y="186.11" width="2.05" height="2.14" fill="#de0000"/><rect x="717.46" y="178.20" width="0.9" height="11.31" fill="#949494"/><rect x="716.88" y="183.85" width="2.05" height="5.03" fill="#00bb00"/><rect x="719.86" y="181.97" width="0.9" height="6.28" fill="#949494"/><rect x="719.28" y="183.22" width="2.05" height="1.26" fill="#de0000"/><rect x="722.26" y="183.60" width="0.9" height="9.05" fill="#949494"/><rect x="721.68" y="184.10" width="2.05" height="4.78" fill="#de0000"/><rect x="724.66" y="186.99" width="0.9" height="7.54" fill="#949494"/><rect x="724.09" y="189.51" width="2.05" height="4.40" fill="#de0000"/><rect x="727.06" y="188.25" width="0.9" height="10.68" fill="#949494"/><rect x="726.49" y="188.88" width="2.05" height="5.28" fill="#00bb00"/><rect x="729.46" y="184.48" width="0.9" height="6.28" fill="#949494"/><rect x="728.88" y="188.63" width="2.05" height="0.88" fill="#00bb00"/><rect x="731.86" y="186.36" width="0.9" height="5.66" fill="#949494"/><rect x="731.28" y="186.99" width="2.05" height="1.89" fill="#00bb00"/><rect x="734.26" y="185.11" width="0.9" height="5.03" fill="#949494"/><rect x="733.68" y="187.62" width="2.05" height="1.26" fill="#de0000"/><rect x="736.66" y="188.25" width="0.9" height="8.80" fill="#949494"/><rect x="736.09" y="188.88" width="2.05" height="7.54" fill="#de0000"/><rect x="739.06" y="195.79" width="0.9" height="9.43" fill="#949494"/><rect x="738.49" y="196.42" width="2.05" height="7.29" fill="#de0000"/><rect x="741.46" y="197.42" width="0.9" height="7.16" fill="#949494"/><rect x="740.88" y="197.93" width="2.05" height="5.78" fill="#00bb00"/><rect x="743.86" y="197.05" width="0.9" height="12.94" fill="#949494"/><rect x="743.28" y="197.93" width="2.05" height="6.03" fill="#de0000"/><rect x="746.26" y="201.45" width="0.9" height="7.54" fill="#949494"/><rect x="745.68" y="203.33" width="2.05" height="2.51" fill="#de0000"/><rect x="748.66" y="189.51" width="0.9" height="25.14" fill="#949494"/><rect x="748.09" y="190.14" width="2.05" height="16.09" fill="#00bb00"/><rect x="751.02" y="209.88" width="0.9" height="27.29" fill="#949494"/><rect x="750.45" y="210.22" width="2.05" height="12.45" fill="#de0000"/><rect x="753.42" y="221.82" width="0.9" height="10.23" fill="#949494"/><rect x="752.85" y="222.16" width="2.05" height="1.71" fill="#de0000"/><rect x="755.82" y="215.00" width="0.9" height="14.50" fill="#949494"/><rect x="755.25" y="217.56" width="2.05" height="6.31" fill="#00bb00"/><rect x="758.22" y="216.71" width="0.9" height="23.88" fill="#949494"/><rect x="757.65" y="217.05" width="2.05" height="16.37" fill="#de0000"/><rect x="760.62" y="226.94" width="0.9" height="24.73" fill="#949494"/><rect x="760.05" y="233.42" width="2.05" height="15.69" fill="#de0000"/><rect x="763.02" y="248.26" width="0.9" height="11.94" fill="#949494"/><rect x="762.45" y="249.11" width="2.05" height="1.02" fill="#f6ee00"/><rect x="765.42" y="234.61" width="0.9" height="15.35" fill="#949494"/><rect x="764.85" y="236.32" width="2.05" height="12.79" fill="#00bb00"/><rect x="767.82" y="236.32" width="0.9" height="10.23" fill="#949494"/><rect x="767.25" y="236.83" width="2.05" height="8.87" fill="#de0000"/><rect x="770.22" y="239.73" width="0.9" height="12.79" fill="#949494"/><rect x="769.65" y="244.00" width="2.05" height="1.71" fill="#00bb00"/><rect x="772.62" y="243.14" width="0.9" height="14.50" fill="#949494"/><rect x="772.05" y="243.65" width="2.05" height="2.39" fill="#de0000"/><rect x="775.02" y="243.65" width="0.9" height="6.31" fill="#949494"/><rect x="774.45" y="244.34" width="2.05" height="2.22" fill="#00bb00"/><rect x="777.42" y="241.44" width="0.9" height="20.47" fill="#949494"/><rect x="776.85" y="244.34" width="2.05" height="13.30" fill="#de0000"/><rect x="779.82" y="256.79" width="0.9" height="35.82" fill="#949494"/><rect x="779.25" y="257.64" width="2.05" height="23.88" fill="#de0000"/><rect x="782.22" y="278.45" width="0.9" height="26.95" fill="#949494"/><rect x="781.65" y="281.18" width="2.05" height="10.57" fill="#de0000"/><rect x="784.62" y="276.06" width="0.9" height="20.81" fill="#949494"/><rect x="784.05" y="277.77" width="2.05" height="13.99" fill="#00bb00"/><rect x="787.02" y="267.53" width="0.9" height="11.43" fill="#949494"/><rect x="786.45" y="274.36" width="2.05" height="3.75" fill="#00bb00"/><rect x="789.42" y="273.84" width="0.9" height="8.53" fill="#949494"/><rect x="788.85" y="274.36" width="2.05" height="4.61" fill="#de0000"/><rect x="791.82" y="277.77" width="0.9" height="11.94" fill="#949494"/><rect x="791.25" y="278.45" width="2.05" height="9.04" fill="#de0000"/><rect x="794.22" y="274.70" width="0.9" height="15.01" fill="#949494"/><rect x="793.65" y="286.98" width="2.05" height="1.36" fill="#de0000"/><rect x="796.62" y="274.36" width="0.9" height="20.81" fill="#949494"/><rect x="796.05" y="283.57" width="2.05" height="3.92" fill="#00bb00"/><rect x="799.02" y="279.47" width="0.9" height="9.72" fill="#949494"/><rect x="798.45" y="284.08" width="2.05" height="1.71" fill="#de0000"/><rect x="801.42" y="283.22" width="0.9" height="8.53" fill="#949494"/><rect x="800.85" y="284.93" width="2.05" height="3.75" fill="#de0000"/><rect x="803.82" y="287.10" width="0.9" height="2.51" fill="#949494"/><rect x="803.25" y="287.98" width="2.05" height="1.01" fill="#00bb00"/><rect x="806.22" y="283.33" width="0.9" height="7.54" fill="#949494"/><rect x="805.65" y="287.98" width="2.05" height="2.01" fill="#de0000"/><rect x="808.62" y="284.59" width="0.9" height="7.54" fill="#949494"/><rect x="808.05" y="287.73" width="2.05" height="1.89" fill="#00bb00"/><rect x="811.02" y="286.47" width="0.9" height="6.28" fill="#949494"/><rect x="810.45" y="287.10" width="2.05" height="0.88" fill="#00bb00"/><rect x="813.42" y="273.65" width="0.9" height="14.08" fill="#949494"/><rect x="812.85" y="274.16" width="2.05" height="13.32" fill="#00bb00"/><rect x="815.82" y="261.34" width="0.9" height="13.82" fill="#949494"/><rect x="815.25" y="263.85" width="2.05" height="10.68" fill="#00bb00"/><rect x="818.22" y="259.45" width="0.9" height="7.54" fill="#949494"/><rect x="817.65" y="263.85" width="2.05" height="1.01" fill="#de0000"/><rect x="820.62" y="262.85" width="0.9" height="11.06" fill="#949494"/><rect x="820.05" y="263.60" width="2.05" height="1.26" fill="#00bb00"/><rect x="823.02" y="263.85" width="0.9" height="11.94" fill="#949494"/><rect x="822.45" y="264.48" width="2.05" height="10.68" fill="#de0000"/><rect x="825.42" y="272.90" width="0.9" height="8.55" fill="#949494"/><rect x="824.85" y="273.28" width="2.05" height="1.63" fill="#00bb00"/><rect x="827.82" y="272.65" width="0.9" height="5.28" fill="#949494"/><rect x="827.25" y="273.28" width="2.05" height="1.63" fill="#de0000"/><rect x="830.22" y="271.39" width="0.9" height="9.43" fill="#949494"/><rect x="829.65" y="274.16" width="2.05" height="5.78" fill="#de0000"/><rect x="832.62" y="270.76" width="0.9" height="11.31" fill="#949494"/><rect x="832.05" y="274.16" width="2.05" height="5.78" fill="#00bb00"/><rect x="835.02" y="271.39" width="0.9" height="8.80" fill="#949494"/><rect x="834.45" y="274.16" width="2.05" height="4.15" fill="#de0000"/><rect x="837.42" y="275.79" width="0.9" height="11.31" fill="#949494"/><rect x="836.85" y="277.93" width="2.05" height="5.78" fill="#de0000"/><rect x="839.82" y="273.65" width="0.9" height="13.45" fill="#949494"/><rect x="839.25" y="277.93" width="2.05" height="6.03" fill="#00bb00"/><rect x="842.22" y="266.99" width="0.9" height="16.97" fill="#949494"/><rect x="841.65" y="270.14" width="2.05" height="8.17" fill="#00bb00"/><rect x="844.58" y="251.91" width="0.9" height="31.42" fill="#949494"/><rect x="844.00" y="252.29" width="2.05" height="21.87" fill="#00bb00"/><rect x="846.98" y="250.03" width="0.9" height="25.76" fill="#949494"/><rect x="849.38" y="246.26" width="0.9" height="18.22" fill="#949494"/><rect x="848.80" y="251.03" width="2.05" height="10.05" fill="#de0000"/><rect x="851.78" y="255.05" width="0.9" height="11.94" fill="#949494"/><rect x="851.21" y="256.56" width="2.05" height="4.78" fill="#00bb00"/><rect x="854.18" y="251.91" width="0.9" height="8.17" fill="#949494"/><rect x="853.61" y="256.06" width="2.05" height="1.26" fill="#de0000"/><rect x="856.58" y="248.14" width="0.9" height="9.43" fill="#949494"/><rect x="856.00" y="255.05" width="2.05" height="1.89" fill="#00bb00"/><rect x="858.98" y="247.26" width="0.9" height="11.56" fill="#949494"/><rect x="858.40" y="251.91" width="2.05" height="3.39" fill="#00bb00"/><rect x="861.38" y="251.28" width="0.9" height="8.17" fill="#949494"/><rect x="860.80" y="252.29" width="2.05" height="2.76" fill="#de0000"/><rect x="863.78" y="248.79" width="0.9" height="9.05" fill="#949494"/><rect x="863.21" y="250.55" width="2.05" height="4.78" fill="#00bb00"/><rect x="866.18" y="234.21" width="0.9" height="21.74" fill="#949494"/><rect x="865.61" y="240.49" width="2.05" height="10.05" fill="#00bb00"/><rect x="868.58" y="232.07" width="0.9" height="16.34" fill="#949494"/><rect x="868.00" y="239.99" width="2.05" height="7.79" fill="#de0000"/><rect x="870.98" y="245.02" width="0.9" height="11.31" fill="#949494"/><rect x="870.40" y="247.78" width="2.05" height="6.54" fill="#de0000"/><rect x="873.38" y="237.10" width="0.9" height="17.22" fill="#949494"/><rect x="872.80" y="239.99" width="2.05" height="13.82" fill="#00bb00"/><rect x="875.78" y="226.42" width="0.9" height="13.57" fill="#949494"/><rect x="875.21" y="227.05" width="2.05" height="12.57" fill="#00bb00"/><rect x="878.18" y="222.90" width="0.9" height="10.43" fill="#949494"/><rect x="877.61" y="227.42" width="2.05" height="1.51" fill="#de0000"/><rect x="880.58" y="227.42" width="0.9" height="10.93" fill="#949494"/><rect x="880.00" y="229.56" width="2.05" height="5.03" fill="#de0000"/><rect x="882.98" y="232.07" width="0.9" height="3.77" fill="#949494"/><rect x="882.40" y="232.70" width="2.05" height="2.26" fill="#00bb00"/><rect x="885.38" y="230.44" width="0.9" height="6.03" fill="#949494"/><rect x="884.80" y="231.19" width="2.05" height="1.51" fill="#00bb00"/><rect x="887.78" y="214.10" width="0.9" height="17.97" fill="#949494"/><rect x="887.21" y="223.65" width="2.05" height="7.79" fill="#00bb00"/><rect x="890.18" y="222.65" width="0.9" height="9.43" fill="#949494"/><rect x="889.61" y="223.28" width="2.05" height="1.63" fill="#de0000"/><rect x="892.58" y="220.14" width="0.9" height="5.66" fill="#949494"/><rect x="892.00" y="222.90" width="2.05" height="2.01" fill="#00bb00"/><rect x="894.98" y="211.34" width="0.9" height="14.45" fill="#949494"/><rect x="894.40" y="211.97" width="2.05" height="11.31" fill="#00bb00"/><rect x="897.38" y="210.33" width="0.9" height="12.57" fill="#949494"/><rect x="896.80" y="212.59" width="2.05" height="9.43" fill="#de0000"/><rect x="899.78" y="213.60" width="0.9" height="10.31" fill="#949494"/><rect x="899.21" y="214.10" width="2.05" height="7.92" fill="#00bb00"/><rect x="902.18" y="208.20" width="0.9" height="8.80" fill="#949494"/><rect x="901.61" y="208.82" width="2.05" height="6.28" fill="#00bb00"/><rect x="904.58" y="204.80" width="0.9" height="5.28" fill="#949494"/><rect x="904.00" y="205.31" width="2.05" height="3.77" fill="#00bb00"/><rect x="906.98" y="200.66" width="0.9" height="7.92" fill="#949494"/><rect x="906.40" y="206.06" width="2.05" height="1.51" fill="#de0000"/><rect x="909.38" y="201.91" width="0.9" height="6.91" fill="#949494"/><rect x="908.80" y="203.80" width="2.05" height="4.40" fill="#00bb00"/><rect x="911.78" y="202.79" width="0.9" height="14.20" fill="#949494"/><rect x="911.21" y="203.55" width="2.05" height="11.31" fill="#de0000"/><rect x="914.18" y="206.06" width="0.9" height="9.05" fill="#949494"/><rect x="913.61" y="213.60" width="2.05" height="1.26" fill="#00bb00"/><rect x="916.58" y="213.22" width="0.9" height="7.54" fill="#949494"/><rect x="916.00" y="213.60" width="2.05" height="5.03" fill="#de0000"/><rect x="918.98" y="216.99" width="0.9" height="9.43" fill="#949494"/><rect x="918.40" y="218.63" width="2.05" height="7.16" fill="#de0000"/><rect x="921.38" y="219.51" width="0.9" height="10.68" fill="#949494"/><rect x="920.80" y="225.16" width="2.05" height="4.02" fill="#de0000"/><rect x="923.78" y="227.93" width="0.9" height="7.18" fill="#949494"/><rect x="923.21" y="228.64" width="2.05" height="3.59" fill="#de0000"/><rect x="926.18" y="227.21" width="0.9" height="7.90" fill="#949494"/><rect x="925.61" y="231.09" width="2.05" height="3.30" fill="#de0000"/><rect x="928.58" y="233.38" width="0.9" height="11.06" fill="#949494"/><rect x="928.00" y="233.96" width="2.05" height="9.77" fill="#de0000"/><rect x="930.98" y="237.26" width="0.9" height="6.46" fill="#949494"/><rect x="930.40" y="237.98" width="2.05" height="5.03" fill="#00bb00"/><rect x="933.38" y="233.67" width="0.9" height="6.46" fill="#949494"/><rect x="932.80" y="237.69" width="2.05" height="1.44" fill="#de0000"/><rect x="935.78" y="237.98" width="0.9" height="20.83" fill="#949494"/><rect x="935.21" y="238.70" width="2.05" height="19.39" fill="#de0000"/><rect x="938.14" y="229.36" width="0.9" height="33.75" fill="#949494"/><rect x="937.56" y="234.39" width="2.05" height="15.08" fill="#00bb00"/><rect x="940.54" y="225.05" width="0.9" height="22.98" fill="#949494"/><rect x="939.96" y="234.82" width="2.05" height="9.62" fill="#de0000"/><rect x="942.94" y="241.57" width="0.9" height="11.49" fill="#949494"/><rect x="942.36" y="244.44" width="2.05" height="5.03" fill="#de0000"/><rect x="945.34" y="248.03" width="0.9" height="8.62" fill="#949494"/><rect x="944.76" y="249.47" width="2.05" height="5.03" fill="#de0000"/><rect x="947.74" y="253.06" width="0.9" height="12.21" fill="#949494"/><rect x="947.16" y="253.78" width="2.05" height="10.77" fill="#de0000"/><rect x="950.14" y="260.96" width="0.9" height="8.90" fill="#949494"/><rect x="949.56" y="264.55" width="2.05" height="3.88" fill="#de0000"/><rect x="952.54" y="263.83" width="0.9" height="9.34" fill="#949494"/><rect x="951.96" y="266.71" width="2.05" height="1.72" fill="#00bb00"/><rect x="954.94" y="261.68" width="0.9" height="8.62" fill="#949494"/><rect x="954.36" y="266.99" width="2.05" height="1.15" fill="#de0000"/><rect x="957.34" y="266.71" width="0.9" height="12.93" fill="#949494"/><rect x="956.76" y="267.42" width="2.05" height="6.18" fill="#de0000"/><rect x="959.74" y="265.27" width="0.9" height="12.21" fill="#949494"/><rect x="959.16" y="272.45" width="2.05" height="1.44" fill="#00bb00"/><rect x="962.14" y="266.71" width="0.9" height="7.90" fill="#949494"/><rect x="961.56" y="269.87" width="2.05" height="4.02" fill="#00bb00"/><rect x="964.54" y="267.42" width="0.9" height="9.34" fill="#949494"/><rect x="963.96" y="269.87" width="2.05" height="5.17" fill="#de0000"/><rect x="966.94" y="271.73" width="0.9" height="5.03" fill="#949494"/><rect x="966.36" y="273.60" width="2.05" height="1.01" fill="#00bb00"/><rect x="969.34" y="271.73" width="0.9" height="10.77" fill="#949494"/><rect x="968.76" y="273.89" width="2.05" height="6.46" fill="#de0000"/><rect x="971.74" y="269.58" width="0.9" height="11.49" fill="#949494"/><rect x="971.16" y="273.60" width="2.05" height="6.75" fill="#00bb00"/><rect x="974.14" y="272.45" width="0.9" height="11.49" fill="#949494"/><rect x="973.56" y="273.60" width="2.05" height="8.90" fill="#de0000"/><rect x="976.54" y="275.32" width="0.9" height="7.18" fill="#949494"/><rect x="975.96" y="280.35" width="2.05" height="1.87" fill="#00bb00"/><rect x="978.94" y="272.45" width="0.9" height="8.90" fill="#949494"/><rect x="978.36" y="275.04" width="2.05" height="5.75" fill="#00bb00"/><rect x="981.34" y="273.17" width="0.9" height="7.18" fill="#949494"/><rect x="980.76" y="275.04" width="2.05" height="1.72" fill="#de0000"/><rect x="983.74" y="271.30" width="0.9" height="8.33" fill="#949494"/><rect x="983.16" y="272.16" width="2.05" height="4.31" fill="#00bb00"/><rect x="986.14" y="265.56" width="0.9" height="8.33" fill="#949494"/><rect x="985.56" y="268.14" width="2.05" height="4.31" fill="#00bb00"/></g>
<g><rect x="18.85" y="409.77" width="2.10" height="15.23" fill="#de0000"/><rect x="21.25" y="413.87" width="2.10" height="11.13" fill="#de0000"/><rect x="23.65" y="412.46" width="2.10" height="12.54" fill="#de0000"/><rect x="26.05" y="414.10" width="2.10" height="10.90" fill="#00bb00"/><rect x="28.45" y="414.80" width="2.10" height="10.20" fill="#00bb00"/><rect x="30.85" y="414.45" width="2.10" height="10.55" fill="#de0000"/><rect x="33.25" y="413.63" width="2.10" height="11.37" fill="#de0000"/><rect x="35.65" y="413.63" width="2.10" height="11.37" fill="#de0000"/><rect x="38.05" y="413.87" width="2.10" height="11.13" fill="#00bb00"/><rect x="40.45" y="412.46" width="2.10" height="12.54" fill="#de0000"/><rect x="42.85" y="419.14" width="2.10" height="5.86" fill="#de0000"/><rect x="45.25" y="419.73" width="2.10" height="5.27" fill="#de0000"/><rect x="47.65" y="419.96" width="2.10" height="5.04" fill="#00bb00"/><rect x="50.05" y="420.66" width="2.10" height="4.34" fill="#f6ee00"/><rect x="52.45" y="419.14" width="2.10" height="5.86" fill="#00bb00"/><rect x="54.85" y="419.73" width="2.10" height="5.27" fill="#de0000"/><rect x="57.25" y="418.32" width="2.10" height="6.68" fill="#00bb00"/><rect x="59.65" y="420.90" width="2.10" height="4.10" fill="#de0000"/><rect x="62.05" y="421.84" width="2.10" height="3.16" fill="#de0000"/><rect x="64.45" y="416.80" width="2.10" height="8.20" fill="#00bb00"/><rect x="66.85" y="419.96" width="2.10" height="5.04" fill="#00bb00"/><rect x="69.25" y="419.96" width="2.10" height="5.04" fill="#de0000"/><rect x="71.65" y="419.96" width="2.10" height="5.04" fill="#de0000"/><rect x="74.05" y="420.90" width="2.10" height="4.10" fill="#00bb00"/><rect x="76.45" y="420.66" width="2.10" height="4.34" fill="#de0000"/><rect x="78.85" y="419.96" width="2.10" height="5.04" fill="#de0000"/><rect x="81.25" y="417.62" width="2.10" height="7.38" fill="#00bb00"/><rect x="83.65" y="416.44" width="2.10" height="8.56" fill="#00bb00"/><rect x="86.05" y="416.44" width="2.10" height="8.56" fill="#00bb00"/><rect x="88.45" y="417.62" width="2.10" height="7.38" fill="#00bb00"/><rect x="90.85" y="413.87" width="2.10" height="11.13" fill="#de0000"/><rect x="93.25" y="401.56" width="2.10" height="23.44" fill="#de0000"/><rect x="95.50" y="402.38" width="2.10" height="22.62" fill="#00bb00"/><rect x="97.90" y="412.46" width="2.10" height="12.54" fill="#de0000"/><rect x="100.30" y="414.10" width="2.10" height="10.90" fill="#de0000"/><rect x="102.70" y="415.62" width="2.10" height="9.38" fill="#de0000"/><rect x="105.10" y="412.93" width="2.10" height="12.07" fill="#00bb00"/><rect x="107.50" y="411.76" width="2.10" height="13.24" fill="#00bb00"/><rect x="109.90" y="417.15" width="2.10" height="7.85" fill="#de0000"/><rect x="112.30" y="419.73" width="2.10" height="5.27" fill="#de0000"/><rect x="114.70" y="418.32" width="2.10" height="6.68" fill="#00bb00"/><rect x="117.10" y="419.73" width="2.10" height="5.27" fill="#de0000"/><rect x="119.50" y="420.31" width="2.10" height="4.69" fill="#00bb00"/><rect x="121.90" y="416.80" width="2.10" height="8.20" fill="#de0000"/><rect x="124.30" y="414.80" width="2.10" height="10.20" fill="#de0000"/><rect x="126.70" y="418.32" width="2.10" height="6.68" fill="#00bb00"/><rect x="131.50" y="420.18" width="2.10" height="4.82" fill="#de0000"/><rect x="133.90" y="419.79" width="2.10" height="5.21" fill="#00bb00"/><rect x="136.30" y="419.29" width="2.10" height="5.71" fill="#de0000"/><rect x="138.70" y="412.56" width="2.10" height="12.44" fill="#de0000"/><rect x="141.10" y="408.75" width="2.10" height="16.25" fill="#de0000"/><rect x="143.50" y="417.26" width="2.10" height="7.74" fill="#00bb00"/><rect x="145.90" y="418.02" width="2.10" height="6.98" fill="#00bb00"/><rect x="148.30" y="419.29" width="2.10" height="5.71" fill="#00bb00"/><rect x="150.70" y="419.79" width="2.10" height="5.21" fill="#de0000"/><rect x="153.10" y="418.65" width="2.10" height="6.35" fill="#00bb00"/><rect x="155.50" y="420.81" width="2.10" height="4.19" fill="#de0000"/><rect x="157.90" y="416.75" width="2.10" height="8.25" fill="#00bb00"/><rect x="160.30" y="420.81" width="2.10" height="4.19" fill="#00bb00"/><rect x="162.70" y="421.45" width="2.10" height="3.55" fill="#00bb00"/><rect x="165.10" y="421.06" width="2.10" height="3.94" fill="#00bb00"/><rect x="167.50" y="420.56" width="2.10" height="4.44" fill="#de0000"/><rect x="169.90" y="419.79" width="2.10" height="5.21" fill="#de0000"/><rect x="172.30" y="418.27" width="2.10" height="6.73" fill="#de0000"/><rect x="174.70" y="419.79" width="2.10" height="5.21" fill="#de0000"/><rect x="177.10" y="418.02" width="2.10" height="6.98" fill="#00bb00"/><rect x="179.50" y="418.91" width="2.10" height="6.09" fill="#de0000"/><rect x="181.90" y="416.75" width="2.10" height="8.25" fill="#de0000"/><rect x="184.30" y="415.10" width="2.10" height="9.90" fill="#de0000"/><rect x="186.70" y="402.02" width="2.10" height="22.98" fill="#00bb00"/><rect x="189.06" y="394.15" width="2.10" height="30.85" fill="#00bb00"/><rect x="191.46" y="395.17" width="2.10" height="29.83" fill="#00bb00"/><rect x="193.86" y="411.92" width="2.10" height="13.08" fill="#00bb00"/><rect x="196.26" y="414.21" width="2.10" height="10.79" fill="#de0000"/><rect x="198.66" y="415.48" width="2.10" height="9.52" fill="#00bb00"/><rect x="201.06" y="415.10" width="2.10" height="9.90" fill="#00bb00"/><rect x="203.46" y="415.73" width="2.10" height="9.27" fill="#de0000"/><rect x="205.86" y="414.72" width="2.10" height="10.28" fill="#de0000"/><rect x="208.26" y="416.75" width="2.10" height="8.25" fill="#00bb00"/><rect x="210.66" y="417.64" width="2.10" height="7.36" fill="#de0000"/><rect x="213.06" y="418.27" width="2.10" height="6.73" fill="#00bb00"/><rect x="215.46" y="417.64" width="2.10" height="7.36" fill="#00bb00"/><rect x="217.86" y="419.79" width="2.10" height="5.21" fill="#de0000"/><rect x="220.26" y="421.06" width="2.10" height="3.94" fill="#00bb00"/><rect x="222.66" y="417.26" width="2.10" height="7.74" fill="#00bb00"/><rect x="225.06" y="420.18" width="2.10" height="4.82" fill="#de0000"/><rect x="227.46" y="415.99" width="2.10" height="9.01" fill="#00bb00"/><rect x="229.86" y="418.91" width="2.10" height="6.09" fill="#de0000"/><rect x="232.26" y="417.26" width="2.10" height="7.74" fill="#de0000"/><rect x="234.66" y="419.29" width="2.10" height="5.71" fill="#de0000"/><rect x="237.06" y="414.21" width="2.10" height="10.79" fill="#00bb00"/><rect x="239.46" y="415.10" width="2.10" height="9.90" fill="#de0000"/><rect x="241.86" y="419.29" width="2.10" height="5.71" fill="#00bb00"/><rect x="244.26" y="419.54" width="2.10" height="5.46" fill="#de0000"/><rect x="246.66" y="421.06" width="2.10" height="3.94" fill="#00bb00"/><rect x="249.06" y="420.18" width="2.10" height="4.82" fill="#de0000"/><rect x="251.46" y="420.56" width="2.10" height="4.44" fill="#00bb00"/><rect x="253.86" y="421.06" width="2.10" height="3.94" fill="#00bb00"/><rect x="256.26" y="420.18" width="2.10" height="4.82" fill="#00bb00"/><rect x="258.66" y="419.29" width="2.10" height="5.71" fill="#00bb00"/><rect x="261.06" y="421.06" width="2.10" height="3.94" fill="#de0000"/><rect x="263.46" y="420.18" width="2.10" height="4.82" fill="#00bb00"/><rect x="265.86" y="418.91" width="2.10" height="6.09" fill="#00bb00"/><rect x="268.26" y="420.56" width="2.10" height="4.44" fill="#de0000"/><rect x="270.66" y="419.29" width="2.10" height="5.71" fill="#00bb00"/><rect x="273.06" y="419.54" width="2.10" height="5.46" fill="#de0000"/><rect x="275.46" y="416.75" width="2.10" height="8.25" fill="#de0000"/><rect x="277.86" y="417.00" width="2.10" height="8.00" fill="#de0000"/><rect x="280.26" y="403.67" width="2.10" height="21.33" fill="#de0000"/><rect x="282.62" y="399.48" width="2.10" height="25.52" fill="#de0000"/><rect x="285.02" y="414.21" width="2.10" height="10.79" fill="#de0000"/><rect x="287.42" y="406.21" width="2.10" height="18.79" fill="#de0000"/><rect x="289.82" y="410.40" width="2.10" height="14.60" fill="#de0000"/><rect x="292.22" y="412.56" width="2.10" height="12.44" fill="#de0000"/><rect x="294.62" y="417.00" width="2.10" height="8.00" fill="#de0000"/><rect x="297.02" y="414.72" width="2.10" height="10.28" fill="#de0000"/><rect x="299.42" y="415.73" width="2.10" height="9.27" fill="#de0000"/><rect x="301.82" y="410.91" width="2.10" height="14.09" fill="#de0000"/><rect x="304.22" y="408.12" width="2.10" height="16.88" fill="#de0000"/><rect x="306.62" y="412.56" width="2.10" height="12.44" fill="#de0000"/><rect x="309.02" y="412.30" width="2.10" height="12.70" fill="#00bb00"/><rect x="311.42" y="414.21" width="2.10" height="10.79" fill="#00bb00"/><rect x="313.82" y="412.56" width="2.10" height="12.44" fill="#de0000"/><rect x="316.22" y="410.02" width="2.10" height="14.98" fill="#de0000"/><rect x="318.62" y="411.67" width="2.10" height="13.33" fill="#de0000"/><rect x="321.02" y="409.13" width="2.10" height="15.87" fill="#de0000"/><rect x="323.42" y="409.13" width="2.10" height="15.87" fill="#00bb00"/><rect x="325.82" y="412.94" width="2.10" height="12.06" fill="#00bb00"/><rect x="328.22" y="413.19" width="2.10" height="11.81" fill="#00bb00"/><rect x="330.62" y="408.12" width="2.10" height="16.88" fill="#00bb00"/><rect x="333.02" y="407.48" width="2.10" height="17.52" fill="#00bb00"/><rect x="335.42" y="414.46" width="2.10" height="10.54" fill="#00bb00"/><rect x="337.82" y="417.00" width="2.10" height="8.00" fill="#de0000"/><rect x="340.22" y="409.38" width="2.10" height="15.62" fill="#00bb00"/><rect x="342.62" y="418.27" width="2.10" height="6.73" fill="#00bb00"/><rect x="345.02" y="418.91" width="2.10" height="6.09" fill="#de0000"/><rect x="347.42" y="414.46" width="2.10" height="10.54" fill="#00bb00"/><rect x="349.82" y="419.29" width="2.10" height="5.71" fill="#00bb00"/><rect x="352.22" y="416.37" width="2.10" height="8.63" fill="#de0000"/><rect x="354.62" y="407.48" width="2.10" height="17.52" fill="#00bb00"/><rect x="357.02" y="410.91" width="2.10" height="14.09" fill="#de0000"/><rect x="359.42" y="415.73" width="2.10" height="9.27" fill="#de0000"/><rect x="361.82" y="408.12" width="2.10" height="16.88" fill="#de0000"/><rect x="364.22" y="418.27" width="2.10" height="6.73" fill="#de0000"/><rect x="366.62" y="412.94" width="2.10" height="12.06" fill="#00bb00"/><rect x="369.02" y="409.64" width="2.10" height="15.36" fill="#00bb00"/><rect x="371.42" y="415.48" width="2.10" height="9.52" fill="#de0000"/><rect x="373.82" y="386.28" width="2.10" height="38.72" fill="#00bb00"/><rect x="376.18" y="397.71" width="2.10" height="27.29" fill="#de0000"/><rect x="378.58" y="413.19" width="2.10" height="11.81" fill="#00bb00"/><rect x="380.98" y="413.45" width="2.10" height="11.55" fill="#00bb00"/><rect x="383.38" y="411.67" width="2.10" height="13.33" fill="#00bb00"/><rect x="385.78" y="416.37" width="2.10" height="8.63" fill="#00bb00"/><rect x="388.18" y="411.29" width="2.10" height="13.71" fill="#00bb00"/><rect x="390.58" y="405.83" width="2.10" height="19.17" fill="#00bb00"/><rect x="392.98" y="417.26" width="2.10" height="7.74" fill="#de0000"/><rect x="395.38" y="417.64" width="2.10" height="7.36" fill="#de0000"/><rect x="397.78" y="416.37" width="2.10" height="8.63" fill="#de0000"/><rect x="400.18" y="417.64" width="2.10" height="7.36" fill="#de0000"/><rect x="402.58" y="419.54" width="2.10" height="5.46" fill="#00bb00"/><rect x="404.98" y="418.53" width="2.10" height="6.47" fill="#00bb00"/><rect x="407.38" y="419.54" width="2.10" height="5.46" fill="#de0000"/><rect x="409.78" y="419.29" width="2.10" height="5.71" fill="#00bb00"/><rect x="412.18" y="416.37" width="2.10" height="8.63" fill="#de0000"/><rect x="414.58" y="420.18" width="2.10" height="4.82" fill="#00bb00"/><rect x="416.98" y="420.56" width="2.10" height="4.44" fill="#de0000"/><rect x="419.38" y="421.45" width="2.10" height="3.55" fill="#de0000"/><rect x="421.78" y="421.70" width="2.10" height="3.30" fill="#de0000"/><rect x="424.18" y="422.33" width="2.10" height="2.67" fill="#00bb00"/><rect x="426.58" y="421.19" width="2.10" height="3.81" fill="#de0000"/><rect x="428.98" y="422.33" width="2.10" height="2.67" fill="#00bb00"/><rect x="431.38" y="416.75" width="2.10" height="8.25" fill="#00bb00"/><rect x="433.78" y="420.18" width="2.10" height="4.82" fill="#de0000"/><rect x="436.18" y="421.45" width="2.10" height="3.55" fill="#00bb00"/><rect x="438.58" y="421.45" width="2.10" height="3.55" fill="#de0000"/><rect x="440.98" y="419.54" width="2.10" height="5.46" fill="#de0000"/><rect x="443.38" y="420.18" width="2.10" height="4.82" fill="#de0000"/><rect x="445.78" y="420.56" width="2.10" height="4.44" fill="#de0000"/><rect x="448.18" y="419.29" width="2.10" height="5.71" fill="#00bb00"/><rect x="450.58" y="419.29" width="2.10" height="5.71" fill="#00bb00"/><rect x="452.98" y="418.91" width="2.10" height="6.09" fill="#de0000"/><rect x="455.38" y="420.18" width="2.10" height="4.82" fill="#00bb00"/><rect x="457.78" y="420.18" width="2.10" height="4.82" fill="#00bb00"/><rect x="460.18" y="417.26" width="2.10" height="7.74" fill="#00bb00"/><rect x="462.58" y="415.48" width="2.10" height="9.52" fill="#00bb00"/><rect x="464.98" y="411.29" width="2.10" height="13.71" fill="#00bb00"/><rect x="467.38" y="396.94" width="2.10" height="28.06" fill="#de0000"/><rect x="469.74" y="401.13" width="2.10" height="23.87" fill="#00bb00"/><rect x="472.14" y="406.21" width="2.10" height="18.79" fill="#00bb00"/><rect x="474.54" y="410.91" width="2.10" height="14.09" fill="#de0000"/><rect x="476.94" y="409.38" width="2.10" height="15.62" fill="#de0000"/><rect x="479.34" y="415.48" width="2.10" height="9.52" fill="#de0000"/><rect x="481.74" y="416.75" width="2.10" height="8.25" fill="#00bb00"/><rect x="484.14" y="418.91" width="2.10" height="6.09" fill="#00bb00"/><rect x="486.54" y="418.91" width="2.10" height="6.09" fill="#de0000"/><rect x="488.94" y="416.75" width="2.10" height="8.25" fill="#de0000"/><rect x="491.34" y="414.72" width="2.10" height="10.28" fill="#00bb00"/><rect x="493.74" y="413.45" width="2.10" height="11.55" fill="#de0000"/><rect x="496.14" y="415.99" width="2.10" height="9.01" fill="#00bb00"/><rect x="498.54" y="420.18" width="2.10" height="4.82" fill="#de0000"/><rect x="500.94" y="420.18" width="2.10" height="4.82" fill="#de0000"/><rect x="503.34" y="417.26" width="2.10" height="7.74" fill="#00bb00"/><rect x="505.74" y="420.81" width="2.10" height="4.19" fill="#de0000"/><rect x="508.14" y="420.18" width="2.10" height="4.82" fill="#f6ee00"/><rect x="510.54" y="421.41" width="2.10" height="3.59" fill="#de0000"/><rect x="512.94" y="422.49" width="2.10" height="2.51" fill="#de0000"/><rect x="515.34" y="422.49" width="2.10" height="2.51" fill="#00bb00"/><rect x="517.74" y="419.25" width="2.10" height="5.75" fill="#de0000"/><rect x="520.14" y="420.33" width="2.10" height="4.67" fill="#de0000"/><rect x="522.54" y="418.18" width="2.10" height="6.82" fill="#de0000"/><rect x="524.94" y="419.08" width="2.10" height="5.92" fill="#de0000"/><rect x="527.34" y="417.28" width="2.10" height="7.72" fill="#00bb00"/><rect x="529.74" y="416.38" width="2.10" height="8.62" fill="#de0000"/><rect x="532.14" y="419.43" width="2.10" height="5.57" fill="#00bb00"/><rect x="534.54" y="419.97" width="2.10" height="5.03" fill="#de0000"/><rect x="536.94" y="419.25" width="2.10" height="5.75" fill="#00bb00"/><rect x="539.34" y="417.28" width="2.10" height="7.72" fill="#de0000"/><rect x="541.74" y="416.02" width="2.10" height="8.98" fill="#de0000"/><rect x="544.14" y="417.82" width="2.10" height="7.18" fill="#de0000"/><rect x="546.54" y="414.23" width="2.10" height="10.77" fill="#de0000"/><rect x="548.94" y="414.59" width="2.10" height="10.41" fill="#de0000"/><rect x="551.34" y="416.74" width="2.10" height="8.26" fill="#de0000"/><rect x="553.74" y="415.48" width="2.10" height="9.52" fill="#de0000"/><rect x="556.14" y="412.43" width="2.10" height="12.57" fill="#00bb00"/><rect x="558.54" y="412.43" width="2.10" height="12.57" fill="#de0000"/><rect x="560.94" y="393.94" width="2.10" height="31.06" fill="#00bb00"/><rect x="563.30" y="338.29" width="2.10" height="86.71" fill="#de0000"/><rect x="565.70" y="411.00" width="2.10" height="14.00" fill="#de0000"/><rect x="568.10" y="414.95" width="2.10" height="10.05" fill="#de0000"/><rect x="570.50" y="403.28" width="2.10" height="21.72" fill="#de0000"/><rect x="572.90" y="409.56" width="2.10" height="15.44" fill="#00bb00"/><rect x="575.30" y="416.02" width="2.10" height="8.98" fill="#00bb00"/><rect x="577.70" y="417.28" width="2.10" height="7.72" fill="#de0000"/><rect x="580.10" y="419.08" width="2.10" height="5.92" fill="#00bb00"/><rect x="582.50" y="416.74" width="2.10" height="8.26" fill="#00bb00"/><rect x="584.90" y="411.36" width="2.10" height="13.64" fill="#de0000"/><rect x="587.30" y="416.02" width="2.10" height="8.98" fill="#de0000"/><rect x="589.70" y="418.18" width="2.10" height="6.82" fill="#de0000"/><rect x="592.10" y="418.54" width="2.10" height="6.46" fill="#de0000"/><rect x="594.50" y="417.64" width="2.10" height="7.36" fill="#00bb00"/><rect x="596.90" y="420.87" width="2.10" height="4.13" fill="#de0000"/><rect x="599.30" y="419.97" width="2.10" height="5.03" fill="#00bb00"/><rect x="601.70" y="420.33" width="2.10" height="4.67" fill="#de0000"/><rect x="604.10" y="420.87" width="2.10" height="4.13" fill="#00bb00"/><rect x="606.50" y="420.87" width="2.10" height="4.13" fill="#00bb00"/><rect x="608.90" y="422.13" width="2.10" height="2.87" fill="#de0000"/><rect x="611.30" y="422.13" width="2.10" height="2.87" fill="#de0000"/><rect x="613.70" y="418.54" width="2.10" height="6.46" fill="#de0000"/><rect x="616.10" y="420.33" width="2.10" height="4.67" fill="#00bb00"/><rect x="618.50" y="417.64" width="2.10" height="7.36" fill="#de0000"/><rect x="620.90" y="415.48" width="2.10" height="9.52" fill="#de0000"/><rect x="623.30" y="420.33" width="2.10" height="4.67" fill="#de0000"/><rect x="625.70" y="422.13" width="2.10" height="2.87" fill="#00bb00"/><rect x="628.10" y="421.23" width="2.10" height="3.77" fill="#de0000"/><rect x="630.50" y="420.51" width="2.10" height="4.49" fill="#00bb00"/><rect x="632.90" y="419.97" width="2.10" height="5.03" fill="#00bb00"/><rect x="635.30" y="410.53" width="2.10" height="14.47" fill="#00bb00"/><rect x="637.70" y="413.32" width="2.10" height="11.68" fill="#00bb00"/><rect x="640.10" y="415.86" width="2.10" height="9.14" fill="#de0000"/><rect x="642.50" y="419.03" width="2.10" height="5.97" fill="#de0000"/><rect x="644.90" y="416.88" width="2.10" height="8.12" fill="#00bb00"/><rect x="647.30" y="415.86" width="2.10" height="9.14" fill="#00bb00"/><rect x="649.70" y="407.23" width="2.10" height="17.77" fill="#00bb00"/><rect x="652.10" y="405.96" width="2.10" height="19.04" fill="#00bb00"/><rect x="654.50" y="366.35" width="2.10" height="58.65" fill="#00bb00"/><rect x="656.86" y="401.89" width="2.10" height="23.11" fill="#00bb00"/><rect x="659.26" y="407.23" width="2.10" height="17.77" fill="#de0000"/><rect x="661.66" y="395.29" width="2.10" height="29.71" fill="#de0000"/><rect x="664.06" y="400.88" width="2.10" height="24.12" fill="#de0000"/><rect x="666.46" y="412.05" width="2.10" height="12.95" fill="#de0000"/><rect x="668.86" y="415.86" width="2.10" height="9.14" fill="#00bb00"/><rect x="671.26" y="412.30" width="2.10" height="12.70" fill="#de0000"/><rect x="673.66" y="410.15" width="2.10" height="14.85" fill="#de0000"/><rect x="676.06" y="414.59" width="2.10" height="10.41" fill="#00bb00"/><rect x="678.46" y="415.22" width="2.10" height="9.78" fill="#00bb00"/><rect x="680.86" y="413.96" width="2.10" height="11.04" fill="#00bb00"/><rect x="683.26" y="413.96" width="2.10" height="11.04" fill="#00bb00"/><rect x="685.66" y="415.22" width="2.10" height="9.78" fill="#00bb00"/><rect x="688.06" y="416.88" width="2.10" height="8.12" fill="#de0000"/><rect x="690.46" y="418.65" width="2.10" height="6.35" fill="#de0000"/><rect x="692.86" y="418.14" width="2.10" height="6.86" fill="#de0000"/><rect x="695.26" y="418.14" width="2.10" height="6.86" fill="#de0000"/><rect x="697.66" y="417.38" width="2.10" height="7.62" fill="#00bb00"/><rect x="700.06" y="418.40" width="2.10" height="6.60" fill="#00bb00"/><rect x="702.46" y="419.92" width="2.10" height="5.08" fill="#de0000"/><rect x="704.86" y="414.21" width="2.10" height="10.79" fill="#00bb00"/><rect x="707.26" y="419.03" width="2.10" height="5.97" fill="#00bb00"/><rect x="709.66" y="422.21" width="2.10" height="2.79" fill="#00bb00"/><rect x="712.06" y="420.30" width="2.10" height="4.70" fill="#00bb00"/><rect x="714.46" y="421.32" width="2.10" height="3.68" fill="#de0000"/><rect x="716.86" y="419.92" width="2.10" height="5.08" fill="#00bb00"/><rect x="719.26" y="420.94" width="2.10" height="4.06" fill="#de0000"/><rect x="721.66" y="420.94" width="2.10" height="4.06" fill="#de0000"/><rect x="724.06" y="421.83" width="2.10" height="3.17" fill="#de0000"/><rect x="726.46" y="419.92" width="2.10" height="5.08" fill="#00bb00"/><rect x="728.86" y="419.92" width="2.10" height="5.08" fill="#00bb00"/><rect x="731.26" y="422.21" width="2.10" height="2.79" fill="#00bb00"/><rect x="733.66" y="422.46" width="2.10" height="2.54" fill="#de0000"/><rect x="736.06" y="421.19" width="2.10" height="3.81" fill="#de0000"/><rect x="738.46" y="417.76" width="2.10" height="7.24" fill="#de0000"/><rect x="740.86" y="419.03" width="2.10" height="5.97" fill="#00bb00"/><rect x="743.26" y="418.40" width="2.10" height="6.60" fill="#de0000"/><rect x="745.66" y="418.14" width="2.10" height="6.86" fill="#de0000"/><rect x="748.06" y="404.18" width="2.10" height="20.82" fill="#00bb00"/><rect x="750.42" y="397.07" width="2.10" height="27.93" fill="#de0000"/><rect x="752.82" y="409.26" width="2.10" height="15.74" fill="#de0000"/><rect x="755.22" y="411.80" width="2.10" height="13.20" fill="#00bb00"/><rect x="757.62" y="411.80" width="2.10" height="13.20" fill="#de0000"/><rect x="760.02" y="405.96" width="2.10" height="19.04" fill="#de0000"/><rect x="762.42" y="404.43" width="2.10" height="20.57" fill="#f6ee00"/><rect x="764.82" y="413.32" width="2.10" height="11.68" fill="#00bb00"/><rect x="767.22" y="417.76" width="2.10" height="7.24" fill="#de0000"/><rect x="769.62" y="418.14" width="2.10" height="6.86" fill="#00bb00"/><rect x="772.02" y="414.84" width="2.10" height="10.16" fill="#de0000"/><rect x="774.42" y="417.76" width="2.10" height="7.24" fill="#00bb00"/><rect x="776.82" y="415.86" width="2.10" height="9.14" fill="#de0000"/><rect x="779.22" y="403.80" width="2.10" height="21.20" fill="#de0000"/><rect x="781.62" y="401.89" width="2.10" height="23.11" fill="#de0000"/><rect x="784.02" y="411.42" width="2.10" height="13.58" fill="#00bb00"/><rect x="786.42" y="415.22" width="2.10" height="9.78" fill="#00bb00"/><rect x="788.82" y="414.84" width="2.10" height="10.16" fill="#de0000"/><rect x="791.22" y="418.40" width="2.10" height="6.60" fill="#de0000"/><rect x="793.62" y="418.14" width="2.10" height="6.86" fill="#de0000"/><rect x="796.02" y="413.96" width="2.10" height="11.04" fill="#00bb00"/><rect x="798.42" y="420.30" width="2.10" height="4.70" fill="#de0000"/><rect x="800.82" y="413.07" width="2.10" height="11.93" fill="#de0000"/><rect x="803.22" y="418.65" width="2.10" height="6.35" fill="#00bb00"/><rect x="805.62" y="415.22" width="2.10" height="9.78" fill="#de0000"/><rect x="808.02" y="417.76" width="2.10" height="7.24" fill="#00bb00"/><rect x="810.42" y="419.03" width="2.10" height="5.97" fill="#00bb00"/><rect x="812.82" y="416.49" width="2.10" height="8.51" fill="#00bb00"/><rect x="815.22" y="410.53" width="2.10" height="14.47" fill="#00bb00"/><rect x="817.62" y="415.86" width="2.10" height="9.14" fill="#de0000"/><rect x="820.02" y="418.14" width="2.10" height="6.86" fill="#00bb00"/><rect x="822.42" y="419.03" width="2.10" height="5.97" fill="#de0000"/><rect x="824.82" y="419.03" width="2.10" height="5.97" fill="#00bb00"/><rect x="827.22" y="421.19" width="2.10" height="3.81" fill="#de0000"/><rect x="829.62" y="420.30" width="2.10" height="4.70" fill="#de0000"/><rect x="832.02" y="419.41" width="2.10" height="5.59" fill="#00bb00"/><rect x="834.42" y="420.30" width="2.10" height="4.70" fill="#de0000"/><rect x="836.82" y="415.22" width="2.10" height="9.78" fill="#de0000"/><rect x="839.22" y="413.32" width="2.10" height="11.68" fill="#00bb00"/><rect x="841.62" y="402.53" width="2.10" height="22.47" fill="#00bb00"/><rect x="843.98" y="403.16" width="2.10" height="21.84" fill="#00bb00"/><rect x="846.38" y="409.26" width="2.10" height="15.74" fill="#00bb00"/><rect x="848.78" y="413.07" width="2.10" height="11.93" fill="#de0000"/><rect x="851.18" y="415.22" width="2.10" height="9.78" fill="#00bb00"/><rect x="853.58" y="416.11" width="2.10" height="8.89" fill="#de0000"/><rect x="855.98" y="415.86" width="2.10" height="9.14" fill="#00bb00"/><rect x="858.38" y="415.22" width="2.10" height="9.78" fill="#00bb00"/><rect x="860.78" y="419.92" width="2.10" height="5.08" fill="#de0000"/><rect x="863.18" y="418.40" width="2.10" height="6.60" fill="#00bb00"/><rect x="865.58" y="409.51" width="2.10" height="15.49" fill="#00bb00"/><rect x="867.98" y="415.22" width="2.10" height="9.78" fill="#de0000"/><rect x="870.38" y="419.92" width="2.10" height="5.08" fill="#de0000"/><rect x="872.78" y="417.13" width="2.10" height="7.87" fill="#00bb00"/><rect x="875.18" y="416.11" width="2.10" height="8.89" fill="#00bb00"/><rect x="877.58" y="414.59" width="2.10" height="10.41" fill="#de0000"/><rect x="879.98" y="418.14" width="2.10" height="6.86" fill="#de0000"/><rect x="882.38" y="421.95" width="2.10" height="3.05" fill="#00bb00"/><rect x="884.78" y="421.95" width="2.10" height="3.05" fill="#00bb00"/><rect x="887.18" y="414.59" width="2.10" height="10.41" fill="#00bb00"/><rect x="889.58" y="421.19" width="2.10" height="3.81" fill="#de0000"/><rect x="891.98" y="421.95" width="2.10" height="3.05" fill="#00bb00"/><rect x="894.38" y="419.29" width="2.10" height="5.71" fill="#00bb00"/><rect x="896.78" y="419.92" width="2.10" height="5.08" fill="#de0000"/><rect x="899.18" y="421.95" width="2.10" height="3.05" fill="#00bb00"/><rect x="901.58" y="420.30" width="2.10" height="4.70" fill="#00bb00"/><rect x="903.98" y="420.30" width="2.10" height="4.70" fill="#00bb00"/><rect x="906.38" y="418.14" width="2.10" height="6.86" fill="#de0000"/><rect x="908.78" y="420.30" width="2.10" height="4.70" fill="#00bb00"/><rect x="911.18" y="419.92" width="2.10" height="5.08" fill="#de0000"/><rect x="913.58" y="420.68" width="2.10" height="4.32" fill="#00bb00"/><rect x="915.98" y="421.19" width="2.10" height="3.81" fill="#de0000"/><rect x="918.38" y="418.65" width="2.10" height="6.35" fill="#de0000"/><rect x="920.78" y="412.05" width="2.10" height="12.95" fill="#de0000"/><rect x="923.18" y="415.22" width="2.10" height="9.78" fill="#de0000"/><rect x="925.58" y="418.14" width="2.10" height="6.86" fill="#de0000"/><rect x="927.98" y="418.14" width="2.10" height="6.86" fill="#de0000"/><rect x="930.38" y="418.14" width="2.10" height="6.86" fill="#00bb00"/><rect x="932.78" y="419.03" width="2.10" height="5.97" fill="#de0000"/><rect x="935.18" y="400.63" width="2.10" height="24.37" fill="#de0000"/><rect x="937.54" y="412.05" width="2.10" height="12.95" fill="#00bb00"/><rect x="939.94" y="416.11" width="2.10" height="8.89" fill="#de0000"/><rect x="942.34" y="418.65" width="2.10" height="6.35" fill="#de0000"/><rect x="944.74" y="411.80" width="2.10" height="13.20" fill="#de0000"/><rect x="947.14" y="416.49" width="2.10" height="8.51" fill="#de0000"/><rect x="949.54" y="417.13" width="2.10" height="7.87" fill="#de0000"/><rect x="951.94" y="418.14" width="2.10" height="6.86" fill="#00bb00"/><rect x="954.34" y="419.03" width="2.10" height="5.97" fill="#de0000"/><rect x="956.74" y="418.14" width="2.10" height="6.86" fill="#de0000"/><rect x="959.14" y="416.49" width="2.10" height="8.51" fill="#00bb00"/><rect x="961.54" y="419.29" width="2.10" height="5.71" fill="#00bb00"/><rect x="963.94" y="421.19" width="2.10" height="3.81" fill="#de0000"/><rect x="966.34" y="421.19" width="2.10" height="3.81" fill="#00bb00"/><rect x="968.74" y="417.38" width="2.10" height="7.62" fill="#de0000"/><rect x="971.14" y="420.68" width="2.10" height="4.32" fill="#00bb00"/><rect x="973.54" y="420.05" width="2.10" height="4.95" fill="#de0000"/><rect x="975.94" y="421.32" width="2.10" height="3.68" fill="#00bb00"/><rect x="978.34" y="421.19" width="2.10" height="3.81" fill="#00bb00"/><rect x="980.74" y="420.68" width="2.10" height="4.32" fill="#de0000"/><rect x="983.14" y="419.92" width="2.10" height="5.08" fill="#00bb00"/><rect x="985.54" y="412.30" width="2.10" height="12.70" fill="#00bb00"/></g>
<g><path d="M95.45 60 V332.4" stroke="#454545" stroke-width="1" stroke-dasharray="1 1" fill="none"/><path d="M188.45 60 V332.4" stroke="#454545" stroke-width="1" stroke-dasharray="1 1" fill="none"/><path d="M282.45 60 V332.4" stroke="#454545" stroke-width="1" stroke-dasharray="1 1" fill="none"/><path d="M375.45 60 V332.4" stroke="#454545" stroke-width="1" stroke-dasharray="1 1" fill="none"/><path d="M469.45 60 V332.4" stroke="#454545" stroke-width="1" stroke-dasharray="1 1" fill="none"/><path d="M563.45 60 V332.4" stroke="#454545" stroke-width="1" stroke-dasharray="1 1" fill="none"/><path d="M656.45 60 V332.4" stroke="#454545" stroke-width="1" stroke-dasharray="1 1" fill="none"/><path d="M750.45 60 V332.4" stroke="#454545" stroke-width="1" stroke-dasharray="1 1" fill="none"/><path d="M843.45 60 V332.4" stroke="#454545" stroke-width="1" stroke-dasharray="1 1" fill="none"/><path d="M937.45 60 V332.4" stroke="#454545" stroke-width="1" stroke-dasharray="1 1" fill="none"/><path d="M95.45 335 V425.3" stroke="#454545" stroke-width="1" stroke-dasharray="1 1" fill="none"/><path d="M188.45 335 V425.3" stroke="#454545" stroke-width="1" stroke-dasharray="1 1" fill="none"/><path d="M282.45 335 V425.3" stroke="#454545" stroke-width="1" stroke-dasharray="1 1" fill="none"/><path d="M375.45 335 V425.3" stroke="#454545" stroke-width="1" stroke-dasharray="1 1" fill="none"/><path d="M469.45 335 V425.3" stroke="#454545" stroke-width="1" stroke-dasharray="1 1" fill="none"/><path d="M563.45 335 V425.3" stroke="#454545" stroke-width="1" stroke-dasharray="1 1" fill="none"/><path d="M656.45 335 V425.3" stroke="#454545" stroke-width="1" stroke-dasharray="1 1" fill="none"/><path d="M750.45 335 V425.3" stroke="#454545" stroke-width="1" stroke-dasharray="1 1" fill="none"/><path d="M843.45 335 V425.3" stroke="#454545" stroke-width="1" stroke-dasharray="1 1" fill="none"/><path d="M937.45 335 V425.3" stroke="#454545" stroke-width="1" stroke-dasharray="1 1" fill="none"/><path d="M95.45 427 V518.0" stroke="#454545" stroke-width="1" stroke-dasharray="1 1" fill="none"/><path d="M188.45 427 V518.0" stroke="#454545" stroke-width="1" stroke-dasharray="1 1" fill="none"/><path d="M282.45 427 V518.0" stroke="#454545" stroke-width="1" stroke-dasharray="1 1" fill="none"/><path d="M375.45 427 V518.0" stroke="#454545" stroke-width="1" stroke-dasharray="1 1" fill="none"/><path d="M469.45 427 V518.0" stroke="#454545" stroke-width="1" stroke-dasharray="1 1" fill="none"/><path d="M563.45 427 V518.0" stroke="#454545" stroke-width="1" stroke-dasharray="1 1" fill="none"/><path d="M656.45 427 V518.0" stroke="#454545" stroke-width="1" stroke-dasharray="1 1" fill="none"/><path d="M750.45 427 V518.0" stroke="#454545" stroke-width="1" stroke-dasharray="1 1" fill="none"/><path d="M843.45 427 V518.0" stroke="#454545" stroke-width="1" stroke-dasharray="1 1" fill="none"/><path d="M937.45 427 V518.0" stroke="#454545" stroke-width="1" stroke-dasharray="1 1" fill="none"/></g>
<polyline fill="none" stroke="#69538f" stroke-width="0.85" stroke-linejoin="round" points="18.6,486.4 21.2,484.7 24.1,465.4 38.4,465.4 41.0,480.4 48.3,480.4 50.7,474.0 57.4,474.0 60.0,464.2 64.8,467.1 67.4,488.1 72.1,488.1 79.5,482.6 81.6,439.9 84.5,439.5 89.3,433.5 93.6,433.0 96.2,475.7 98.8,477.4 105.7,477.4 108.6,484.3 110.9,485.7 120.0,485.7 122.9,494.3 127.2,497.8 137.2,497.8 139.7,506.8 141.9,508.5 148.8,508.5 156.6,503.0 163.4,498.1 166.0,494.3 168.3,494.3 170.7,489.5 175.5,489.5 175.5,489.5 177.8,451.2 189.8,451.2 192.1,436.4 199.7,436.4 204.5,439.9 206.7,470.6 247.1,470.6 249.7,485.7 252.4,484.3 254.5,460.6 269.1,460.6 271.4,462.3 273.8,479.2 278.6,479.2 281.2,510.2 283.4,511.9 285.9,511.9 288.3,484.7 290.7,489.5 292.8,489.5 295.0,492.6 301.0,496.4 308.8,502.4 312.2,503.3 316.6,508.1 319.1,508.5 322.1,511.9 324.3,511.9 328.3,507.6 331.2,506.4 333.8,499.9 333.8,499.9 341.2,499.9 348.1,493.3 350.3,493.3 352.8,449.9 355.0,448.5 365.3,448.5 367.9,439.9 370.0,438.1 372.2,437.8 374.5,434.3 379.7,434.3 381.7,437.4 386.6,439.5 388.6,431.2 391.2,431.2 400.7,437.8 403.3,441.2 405.9,441.6 407.9,444.7 410.2,444.7 412.8,464.0 437.2,464.0 446.4,470.2 449.0,511.6 451.2,510.6 453.8,498.1 468.3,498.1 470.5,455.0 472.2,453.7 504.1,453.7 506.7,460.2 514.1,460.2 516.2,462.3 518.6,468.8 525.7,468.8 528.3,510.2 530.5,510.2 537.9,505.0 540.0,511.9 542.2,513.3 552.1,513.3 554.7,506.8 556.9,508.5 566.7,508.5 569.7,511.1 571.9,512.3 574.5,511.9 578.4,508.5 581.0,498.5 593.1,498.5 595.5,496.4 597.9,477.8 622.4,477.8 624.5,475.7 626.7,436.4 629.3,436.4 631.7,470.6 634.1,470.6 636.2,461.1 638.6,458.8 643.4,458.5 646.0,453.3 650.7,449.9 655.5,446.4 660.3,446.4 662.6,477.4 667.2,480.6 671.6,480.6 674.5,486.1 712.4,486.1 717.6,482.6 719.8,441.2 731.9,441.2 736.2,443.8 738.8,446.8 741.4,456.4 748.3,456.4 750.9,496.4 755.7,496.4 758.3,501.6 762.9,505.0 775.0,505.0 777.6,513.7 779.7,513.7 781.9,510.6 787.1,510.6 789.7,506.8 792.2,506.4 794.5,505.0 796.9,496.4 806.6,496.4 811.4,491.2 811.8,490.8 814.4,490.4 817.9,487.3 820.5,484.1 823.2,483.8 826.7,481.1 830.2,475.9 834.6,475.9 837.2,474.1 839.9,446.9 842.5,447.7 844.6,438.4 849.6,434.5 854.8,434.5 856.9,444.7 864.1,444.7 866.2,432.4 868.9,431.0 871.2,432.4 873.6,451.2 876.4,446.5 879.4,444.7 885.6,444.7 888.2,437.7 892.6,437.7 895.3,432.4 897.4,431.0 899.6,432.4 903.2,431.0 905.8,431.4 908.4,432.4 911.1,433.7 914.1,439.5 919.3,439.5 921.6,441.6 924.3,446.5 929.5,446.5 931.3,448.6 933.0,487.3 935.7,492.9 938.0,494.7 945.3,494.7 948.0,500.5 952.4,504.5 955.0,504.9 958.0,508.4 964.3,508.4 967.3,506.3 969.6,513.3 972.6,511.9 974.7,513.3 979.3,510.1 981.9,496.4 986.7,496.4"/>
<g font-family="Liberation Sans, sans-serif" font-size="6.4" fill="#ababab"><text x="990.1" y="316.03">264.00</text><text x="990.1" y="302.20">265.00</text><text x="990.1" y="288.36">266.00</text><text x="990.1" y="274.53">267.00</text><text x="990.1" y="260.69">268.00</text><text x="990.1" y="246.86">269.00</text><text x="990.1" y="233.02">270.00</text><text x="990.1" y="219.19">271.00</text><text x="990.1" y="205.35">272.00</text><text x="990.1" y="191.52">273.00</text><text x="990.1" y="177.68">274.00</text><text x="990.1" y="163.85">275.00</text><text x="990.1" y="150.01">276.00</text><text x="990.1" y="136.18">277.00</text><text x="990.1" y="122.34">278.00</text><text x="990.1" y="108.51">279.00</text><text x="990.1" y="94.67">280.00</text><text x="990.1" y="80.83">281.00</text><text x="990.1" y="67.00">282.00</text><text x="990.1" y="418.68">250.0K</text><text x="990.1" y="409.46">500.0K</text><text x="990.1" y="400.24">750.0K</text><text x="990.1" y="391.02">1.0M</text><text x="990.1" y="381.80">1.25M</text><text x="990.1" y="372.58">1.5M</text><text x="990.1" y="363.36">1.75M</text><text x="990.1" y="354.14">2.0M</text><text x="990.1" y="344.92">2.25M</text><text x="990.1" y="442.60">75</text><text x="990.1" y="453.40">50</text><text x="990.1" y="464.20">25</text><text x="990.1" y="475.00">0</text><text x="990.1" y="485.80">-25</text><text x="990.1" y="496.60">-50</text><text x="990.1" y="507.40">-75</text></g>
<g font-family="Liberation Sans, sans-serif" font-size="6.4" fill="#c0c0c0"><text x="37.7" y="525.7" text-anchor="middle">12:00</text><text x="66.5" y="525.7" text-anchor="middle">14:00</text><text x="95.3" y="525.7" text-anchor="middle" font-weight="bold" fill="#e8e8e8">Dec 11</text><text x="131.3" y="525.7" text-anchor="middle">12:00</text><text x="160.1" y="525.7" text-anchor="middle">14:00</text><text x="188.9" y="525.7" text-anchor="middle" font-weight="bold" fill="#e8e8e8">Dec 14</text><text x="224.9" y="525.7" text-anchor="middle">12:00</text><text x="253.7" y="525.7" text-anchor="middle">14:00</text><text x="282.4" y="525.7" text-anchor="middle" font-weight="bold" fill="#e8e8e8">Dec 15</text><text x="318.4" y="525.7" text-anchor="middle">12:00</text><text x="347.2" y="525.7" text-anchor="middle">14:00</text><text x="376.0" y="525.7" text-anchor="middle" font-weight="bold" fill="#e8e8e8">Dec 16</text><text x="412.0" y="525.7" text-anchor="middle">12:00</text><text x="440.8" y="525.7" text-anchor="middle">14:00</text><text x="469.5" y="525.7" text-anchor="middle" font-weight="bold" fill="#e8e8e8">Dec 17</text><text x="505.5" y="525.7" text-anchor="middle">12:00</text><text x="534.3" y="525.7" text-anchor="middle">14:00</text><text x="563.1" y="525.7" text-anchor="middle" font-weight="bold" fill="#e8e8e8">Dec 18</text><text x="599.1" y="525.7" text-anchor="middle">12:00</text><text x="627.9" y="525.7" text-anchor="middle">14:00</text><text x="656.7" y="525.7" text-anchor="middle" font-weight="bold" fill="#e8e8e8">Dec 21</text><text x="692.7" y="525.7" text-anchor="middle">12:00</text><text x="721.5" y="525.7" text-anchor="middle">14:00</text><text x="750.2" y="525.7" text-anchor="middle" font-weight="bold" fill="#e8e8e8">Dec 22</text><text x="786.2" y="525.7" text-anchor="middle">12:00</text><text x="815.0" y="525.7" text-anchor="middle">14:00</text><text x="843.8" y="525.7" text-anchor="middle" font-weight="bold" fill="#e8e8e8">Dec 23</text><text x="879.8" y="525.7" text-anchor="middle">12:00</text><text x="908.6" y="525.7" text-anchor="middle">14:00</text><text x="937.3" y="525.7" text-anchor="middle" font-weight="bold" fill="#e8e8e8">Dec 24</text><text x="973.3" y="525.7" text-anchor="middle">12:00</text></g>
</svg>
<!-- chart title row -->
<div class="t" style="left:14.2px;top:43.6px;font-size:5.9px;color:#f2f2f2;font-weight:bold">FB</div>
<div class="t" style="left:24px;top:45.3px;font-size:4.5px;color:#e8e8e8">▼</div>
<div class="t" style="left:31.7px;top:43.6px;font-size:6px;color:#f2f2f2;font-weight:bold">10 min candles</div>
<div class="t" style="left:76px;top:45.3px;font-size:4.5px;color:#e8e8e8">▼</div>
<div class="t" style="left:84.5px;top:43.4px;font-size:6.2px;color:#969696"><u>F</u>ile</div>
<div class="t" style="left:99px;top:43.4px;font-size:6.2px;color:#969696"><u>E</u>dit</div>
<div class="t" style="left:114.9px;top:43.4px;font-size:6.2px;color:#969696"><u>V</u>iew</div>
<!-- chart title right icons -->
<svg class="a" style="left:988.6px;top:43.6px" width="6" height="6" viewBox="0 0 6 6"><circle cx="3" cy="3.3" r="2.6" fill="#2e2e2e"/></svg>
<svg class="a" style="left:995.7px;top:43.8px" width="6.6" height="6.6" viewBox="0 0 8 8"><g fill="none" stroke="#357c35" stroke-width="0.95"><rect x="0.8" y="4" width="3.2" height="2.2" rx="1.1" transform="rotate(-45 2.4 5.1)"/><rect x="3.8" y="1.4" width="3.2" height="2.2" rx="1.1" transform="rotate(-45 5.4 2.5)"/></g></svg>
<svg class="a" style="left:1004.8px;top:43.2px" width="7" height="7" viewBox="0 0 7 7"><path d="M0.4 2 V0.4 H2 M5 0.4 H6.6 V2 M6.6 5 V6.6 H5 M2 6.6 H0.4 V5" stroke="#555" stroke-width="0.8" fill="none"/></svg>

<!-- chart toolbar icons -->
<svg class="a" style="left:11px;top:51px" width="80" height="9" viewBox="0 0 80 9">
<path d="M1.2 3.3 L3.4 5.9 M3.4 3.3 L1.2 5.9" stroke="#7a1a1a" stroke-width="0.9"/>
<rect x="6.1" y="1.9" width="5.2" height="5.2" fill="#82b2cc" stroke="#9cc4dc" stroke-width="0.4"/><path d="M7.3 3.3 H10.1 M8.7 3.3 V6.4" stroke="#4c7c9a" stroke-width="0.9"/>
<path d="M15 7 V3.4 L17 2 L19.2 3.6 V7" stroke="#27503a" stroke-width="1.1" fill="none"/><path d="M15.2 6.6 V4.4 L17 5.4 L19 4.2 V6.6" stroke="#2c3c70" stroke-width="0.9" fill="none"/>
<path d="M23.2 4.2 L26.8 2.2" stroke="#888" stroke-width="0.7"/><path d="M25.4 3.6 L27 7 L27.6 5.8 L28.6 6.6 Z" fill="#ddd" stroke="#bbb" stroke-width="0.4"/>
<circle cx="32.8" cy="3.8" r="1.5" fill="#ddd" stroke="#999" stroke-width="0.6"/><path d="M33.9 5 L36 7.2" stroke="#aaa" stroke-width="1.2"/>
<circle cx="41.2" cy="3.8" r="1.5" fill="#ddd" stroke="#999" stroke-width="0.6"/><path d="M42.3 5 L44.4 7.2" stroke="#aaa" stroke-width="1.2"/>
<path d="M48 4.7 H53.4 M50.7 2 V7.4" stroke="#5a402a" stroke-width="0.7"/>
<rect x="58" y="1.8" width="2.2" height="5.8" fill="#2a5573"/><path d="M56.2 4.7 L58 3.3 V6.1 Z M62 4.7 L60.2 3.3 V6.1 Z" fill="#5f8560"/>
<path d="M67.4 1.8 V7.4" stroke="#f4f4f4" stroke-width="0.9"/><path d="M65.4 4.6 H66.4 M68.4 4.6 H69.4" stroke="#f4f4f4" stroke-width="0.9"/><path d="M65.2 3.6 V5.6 M69.6 3.6 V5.6" stroke="#ccc" stroke-width="0.5"/>
<path d="M72.8 3.6 H76 L74.4 5.8 Z" fill="#eee"/>
</svg>

<!-- small flag icons bottom-left of main chart -->
<svg class="a" style="left:11.5px;top:320px" width="7" height="14" viewBox="0 0 7 14">
<path d="M1.7 0.4 V4.4" stroke="#4a8ac8" stroke-width="1.4"/><path d="M2.6 2.4 H5" stroke="#b01818" stroke-width="0.8"/>
<path d="M1.7 7.2 V11.4" stroke="#4a8ac8" stroke-width="1.4"/><path d="M2.5 8.2 L4.8 9.3 L2.5 10.4 Z" fill="#1c9048"/>
</svg>

<!-- yellow time highlight -->
<div class="a" style="left:406.8px;top:518.6px;width:36.2px;height:7.6px;background:#e2de2a"></div>
<svg class="a" style="left:422.6px;top:516.8px" width="5" height="3" viewBox="0 0 5 3"><path d="M2.3 0 L4.2 2.4 H0.4 Z" fill="#e2de2a"/></svg>
<div class="t" style="left:407.6px;top:519.6px;font-size:6.2px;color:#222">12/16 12:50</div>
<div class="t" style="left:988.6px;top:521.2px;font-size:5px;color:#aaa">»</div>

<!-- horizontal scrollbar -->
<div class="a" style="left:10.5px;top:528.8px;width:1003px;height:6.6px;background:#1f1f1f"></div>
<div class="a" style="left:10.5px;top:534.6px;width:1003px;height:0.8px;background:#4a4a4a"></div>
<div class="a" style="left:10.4px;top:528.8px;width:5.6px;height:6px;background:#c6c6c6;border:0.5px solid #eee"></div>
<svg class="a" style="left:10.8px;top:529.6px" width="5" height="5" viewBox="0 0 5 5"><path d="M3.6 0.6 V3.8 L0.8 2.2 Z" fill="#223a70"/></svg>
<div class="a" style="left:1006.2px;top:528.8px;width:7.2px;height:6px;background:#c6c6c6;border:0.5px solid #eee"></div>
<svg class="a" style="left:1007.6px;top:529.6px" width="5" height="5" viewBox="0 0 5 5"><path d="M1 0.6 V3.8 L3.8 2.2 Z" fill="#223a70"/></svg>
<div class="a" style="left:847px;top:528.8px;width:159.2px;height:6px;background:#393939"></div><div class="a" style="left:846.6px;top:529.2px;width:2.2px;height:5.4px;background:#8a8a8a"></div>
<div class="t" style="left:62.4px;top:531px;font-size:4.8px;color:#505050">Sep 14</div>
<div class="t" style="left:185.0px;top:531px;font-size:4.8px;color:#505050">Sep 28</div>
<div class="t" style="left:308.0px;top:531px;font-size:4.8px;color:#505050">Oct 12</div>
<div class="t" style="left:431.4px;top:531px;font-size:4.8px;color:#505050">Oct 26</div>
<div class="t" style="left:554.3px;top:531px;font-size:4.8px;color:#505050">Nov 9</div>
<div class="t" style="left:677.0px;top:531px;font-size:4.8px;color:#505050">Nov 23</div>
<div class="t" style="left:800.3px;top:531px;font-size:4.8px;color:#505050">Dec 7</div>
<div class="t" style="left:953.8px;top:531px;font-size:4.8px;color:#505050">Dec 21</div>

<!-- right column next to chart window -->
<div class="a" style="left:1013.5px;top:42px;width:10.5px;height:494px;background:#121212"></div>
<div class="a" style="left:1014.2px;top:42.6px;width:7px;height:8.4px;background:#767676;border-radius:1px"></div>
<div class="t" style="left:1015.6px;top:43.6px;font-size:6px;color:#dcdcdc;font-weight:bold">er</div>
<div class="a" style="left:1013.6px;top:64px;width:2.2px;height:337px;background:#25251a"></div>
<div class="t" style="left:1014.2px;top:57.8px;font-size:3px;color:#888">▪</div>
<div class="a" style="left:1016px;top:63.4px;width:5.6px;height:338px;background:#3b3b3b;border-radius:1px"></div>
<div class="a" style="left:1017.4px;top:66px;width:3px;height:329px;background:#4a4a4a"></div>
<svg class="a" style="left:1016.4px;top:63.6px" width="5" height="4" viewBox="0 0 5 4"><path d="M2.4 0.6 L4.4 3.2 H0.4 Z" fill="#e8e8e8"/></svg>
<svg class="a" style="left:1016.4px;top:395.6px" width="5" height="4" viewBox="0 0 5 4"><path d="M2.4 3.2 L4.4 0.6 H0.4 Z" fill="#e8e8e8"/></svg>
<div class="a" style="left:1014px;top:402px;width:8.4px;height:8.4px;background:#1e1e1e;border:0.5px solid #333"></div>
<svg class="a" style="left:1015px;top:403px" width="7" height="7" viewBox="0 0 7 7"><path d="M0.8 0.8 L5.8 5.8 M5.8 0.8 L0.8 5.8" stroke="#8a8a8a" stroke-width="0.7"/></svg>
<div class="a" style="left:1014px;top:411px;width:8.2px;height:5.6px;background:#8a8a8a"></div>
<div class="a" style="left:1014px;top:416.4px;width:8.2px;height:126px;background:#b2b2b6;border-radius:0 0 3px 0"></div>
<!-- bottom gray bars -->
<div class="a" style="left:526px;top:535.6px;width:496.2px;height:3.2px;background:#ababae"></div>
<div class="a" style="left:526px;top:538.6px;width:496.2px;height:4.2px;background:#8b8b8d;border-radius:0 0 3px 1px"></div>
<div class="a" style="left:2px;top:536px;width:524px;height:7px;background:#161616;border-radius:0 0 0 3px"></div>

<div class="a" style="left:1022.2px;top:11.4px;width:1.8px;height:532px;background:#0a0a0a"></div>
<!-- bottom bar -->
<div class="a" style="left:0;top:543.4px;width:1024px;height:13.6px;background:#131313"></div>
<div class="a" style="left:10.5px;top:544.6px;width:29px;height:10.4px;background:#1e1e1e"></div>
<div class="t" style="left:14.2px;top:546.6px;font-size:6.3px;color:#f0f0f0">Mosaic</div>
<div class="a" style="left:10.5px;top:554.2px;width:29px;height:0.8px;background:#444"></div>
<div class="t" style="left:45px;top:546.6px;font-size:6.2px;color:#5a5a5a">Classic TWS</div>
<div class="a" style="left:85.6px;top:545px;width:0.7px;height:9px;background:#1e1e1e"></div>
<div class="t" style="left:90.8px;top:546.6px;font-size:6.2px;color:#5a5a5a">Learn</div>
<div class="a" style="left:111.6px;top:545px;width:0.7px;height:9px;background:#1e1e1e"></div>
<div class="t" style="left:114.6px;top:545.2px;font-size:8px;color:#8a8a8a">+</div>
<div class="t" style="left:943.6px;top:547.3px;font-size:4.65px;color:#8c8c8c;letter-spacing:0.05px">DATA POWERED BY</div>
<svg class="a" style="left:990px;top:544.6px" width="9" height="9" viewBox="0 0 9 9"><path d="M3.2 1.4 L5 0.8 L5.6 2.4 L7 3.6 L6.2 5 L7.6 6.6 L5.4 7.2 L4.2 6 L2.6 6.4 L3 4.4 L1.8 3.4 Z" fill="#2f8fe0"/><circle cx="1.4" cy="4" r="0.7" fill="#d02020"/></svg>
<div class="t" style="left:998.6px;top:546.1px;font-size:6.3px;color:#1f7fd6;letter-spacing:-0.45px">GFIS</div>
<!-- bottom edge strip -->
<div class="a" style="left:0;top:555.8px;width:1024px;height:1.2px;background:#3a3d3d"></div>
<div class="a" style="left:24px;top:555.6px;width:171px;height:1.4px;background:#e8e8e8"></div>
<div class="a" style="left:620px;top:555.8px;width:404px;height:1.2px;background:#4a5a58"></div>
<!-- buy/sell + mini toolbar -->
<div class="a" style="left:427.9px;top:174.7px;width:11.9px;height:5.6px;background:#1818a4"></div>
<div class="t" style="left:430.2px;top:175.7px;font-size:4.1px;color:#dde;font-weight:bold;letter-spacing:0.1px">BUY</div>
<div class="a" style="left:442.1px;top:174.7px;width:13.3px;height:5.6px;background:#c41212"></div>
<div class="t" style="left:444px;top:175.7px;font-size:4.1px;color:#fdd;font-weight:bold;letter-spacing:0.1px">SELL</div>
<div class="a" style="left:459.9px;top:174.1px;width:58.3px;height:9.1px;background:#d4d4d4;border-radius:1.6px"></div>
<div class="a" style="left:474.2px;top:175px;width:8px;height:8.8px;background:#4f96e6;border-radius:0.8px"></div>
<svg class="a" style="left:460px;top:174px" width="59" height="10" viewBox="0 0 59 10">
<path d="M5.4 1.6 L7 3.6 L6.4 3.8 Q6.8 5.6 6 6.2 Q5 6.4 4.8 5.4 L4.9 3.8 L4 3.6 Z" fill="#176a32"/><path d="M8.2 8.4 L6.4 6.6 L7 6.2 Q6.8 4.6 7.8 4.2 Q8.8 4.2 9 5.4 L9 6.4 L9.8 6.8 Z" fill="#7c1c1c"/>
<rect x="14.9" y="2" width="4.2" height="7.4" fill="#9ccaf8"/><path d="M17 2.4 V9" stroke="#6fb0f4" stroke-width="0.6"/><rect x="19.7" y="4" width="2.3" height="5.6" fill="#1f6fe0"/>
<circle cx="29.6" cy="4.4" r="2.7" fill="#d4e2ec" stroke="#8aa" stroke-width="0.5"/><path d="M28 3 Q29.6 1.8 31 3.2" stroke="#7a9ab8" stroke-width="0.6" fill="none"/><circle cx="31.4" cy="6.2" r="1.6" fill="#3cc03c"/>
<g fill="#b4b4b4" stroke="#8e8e8e" stroke-width="0.5"><rect x="37.6" y="4.6" width="4.4" height="2.6" rx="1.3" transform="rotate(-25 39.8 5.9)"/><rect x="40.8" y="2.6" width="4.4" height="2.8" rx="1.4" transform="rotate(-25 43 4)"/></g>
<path d="M54.4 1.4 L52.9 4.6" stroke="#8a5a20" stroke-width="1"/><path d="M51.6 4.3 L54.4 5 L54.8 8 L50.4 7.4 Z" fill="#e4c41c"/>
</svg>
<!-- context menu -->
<div class="a" id="menu" style="left:427.9px;top:184.6px;width:86.0px;height:203.2px;background:#ececec;border-left:0.5px solid #93a0bd;border-right:0.5px solid #b8bccb;border-bottom:0.5px solid #aab">
<div class="a" style="left:0;top:0;width:100%;height:6.5px;background:#c5c5c5"></div>
<div class="t" style="left:2.2px;top:1.1px;font-size:5.3px;color:#222;font-weight:bold">FB</div>
<div class="mi" style="top:7.1px"><svg class="ic" viewBox="0 0 6 6"><path d="M0.2 3 H5.8 M3 0.2 V5.8" stroke="#c87840" stroke-width="0.6"/></svg>Turn Crosshair On</div>
<div class="mi" style="top:15.4px">Show Legend</div>
<div class="mi" style="top:23.8px"><svg class="ic" viewBox="0 0 6 6"><path d="M0.2 3.3 L2.3 2.2 L3.8 0.7" stroke="#4a6a9a" stroke-width="0.65" fill="none"/><path d="M2.7 2.4 Q2.5 4.6 3.8 5 Q5 4.8 4.4 3.8" stroke="#556" stroke-width="0.55" fill="none"/></svg>Edit Chart<span class="ar">▶</span></div>
<div class="mi" style="top:32.2px"><svg class="ic" viewBox="0 0 6 6"><path d="M5.3 4.4 Q5.6 1.6 3.2 1.6 Q1.9 1.6 1.5 2.8" stroke="#2a7ae0" stroke-width="1.5" fill="none"/><path d="M0 2.2 L3 2.5 L1.2 4.6 Z" fill="#2a7ae0"/></svg>Undo</div>
<div class="mi d" style="top:40.6px"><svg class="ic" viewBox="0 0 6 6"><path d="M0.8 4.4 Q0.5 1.8 2.8 1.8 Q4.2 1.8 4.6 2.8" stroke="#c6c6c6" stroke-width="1" fill="none"/><path d="M6 2.4 L3.4 2.6 L5 4.5 Z" fill="#c6c6c6"/></svg>Redo</div>
<div class="mi" style="top:49.0px"><svg class="ic" viewBox="0 0 6 6"><path d="M0.6 2.2 H3.2 V0.8 L5.6 3 L3.2 5.2 V3.8 H0.6 Z" fill="#cfe2f8" stroke="#2a6ac8" stroke-width="0.6"/></svg>Add Arrow<span class="ar">▶</span></div>
<div class="mi" style="top:57.4px"><svg class="ic" viewBox="0 0 6 6"><rect x="2.6" y="1" width="3" height="4.6" fill="#3a7ad0"/><path d="M0.4 5 L3.4 0.6" stroke="#2a9a4a" stroke-width="0.9"/><path d="M0.6 5.4 H5.6" stroke="#2a4a8a" stroke-width="0.5"/></svg>Add Fibonacci Line</div>
<div class="mi" style="top:65.8px"><svg class="ic" viewBox="0 0 6 6"><path d="M0.4 0.8 L4.8 5.4" stroke="#3a6ab8" stroke-width="0.7"/><path d="M4 0.4 L5.6 2 M5.6 0.4 L4 2" stroke="#d02020" stroke-width="0.6"/></svg>Remove Selected Trendline</div>
<div class="mi" style="top:74.7px"><svg class="ic" viewBox="0 0 6 6"><path d="M0.4 1 L4.4 5.4 M1.6 0.6 L5.4 4.8 M0.4 2.6 L3 5.6" stroke="#3a6ab8" stroke-width="0.8"/><path d="M4.2 0.2 L5.8 1.8 M5.8 0.2 L4.2 1.8" stroke="#d02020" stroke-width="0.6"/></svg>Remove All Trendlines</div>
<div class="mi" style="top:83.1px"><svg class="ic" viewBox="0 0 6 6"><path d="M1.4 5.6 V3 L0.6 1.6 L1.4 1.2 L2.2 2.4 V0.8 H3 V2.4 L3.4 1 H4.2 V2.6 L4.8 1.6 L5.4 1.8 V4.4 L4.6 5.6 Z" fill="#f4f4f4" stroke="#333" stroke-width="0.45"/></svg>Reposition</div>
<div class="mi d" style="top:92.0px"><svg class="ic" viewBox="0 0 6 6"><circle cx="2.2" cy="2.2" r="1.5" fill="#eee" stroke="#c2c2c2" stroke-width="0.6"/><path d="M3.4 3.4 L5.4 5.4" stroke="#c2c2c2" stroke-width="1"/></svg>Zoom in</div>
<div class="mi d" style="top:100.4px"><svg class="ic" viewBox="0 0 6 6"><circle cx="2.2" cy="2.2" r="1.5" fill="#eee" stroke="#c2c2c2" stroke-width="0.6"/><path d="M3.4 3.4 L5.4 5.4" stroke="#c2c2c2" stroke-width="1"/></svg>Zoom out</div>
<div class="mi" style="top:109.0px"><svg class="ic" viewBox="0 0 6 6"><circle cx="3" cy="3" r="1.3" fill="none" stroke="#e03030" stroke-width="0.55"/><path d="M3 0.2 V1.8 M3 4.2 V5.8 M0.2 3 H1.8 M4.2 3 H5.8" stroke="#e03030" stroke-width="0.8"/></svg>Chart Parameters...</div>
<div class="mi" style="top:117.9px"><svg class="ic" viewBox="0 0 6 6"><circle cx="3.4" cy="2.8" r="2.2" fill="#d8e4f4" stroke="#3a6ab8" stroke-width="0.6"/><path d="M3.4 1.4 V2.8 L4.4 3.4" stroke="#333" stroke-width="0.5" fill="none"/><circle cx="1.4" cy="4.6" r="1.2" fill="#d03030"/></svg>Shift Time Period...</div>
<div class="mi d" style="top:126.2px"><svg class="ic" viewBox="0 0 6 6"><circle cx="3.2" cy="3" r="2.2" fill="#dcdcdc" stroke="#c4c4c4" stroke-width="0.6"/></svg>Shift Time Period to Present</div>
<div class="mi" style="top:135.1px"><svg class="ic" viewBox="0 0 6 6"><path d="M0.8 5.6 V1.6 M2.6 5.6 V2.6 M4.4 5.6 V1.2" stroke="#5a8a9a" stroke-width="0.9"/><path d="M0.6 0.2 V2 M-0.2 1.1 H1.5" stroke="#2a9a3a" stroke-width="0.7"/><path d="M0.4 5.7 H5.6" stroke="#678" stroke-width="0.4"/></svg>Add Financial Instrument...</div>
<div class="mi" style="top:143.5px"><svg class="ic" viewBox="0 0 6 6"><path d="M0.4 4.6 L2 2.6 L3.4 3.6 L5.6 1" stroke="#4a5ad8" stroke-width="0.6" fill="none"/><path d="M0.4 5.4 L2.2 4 L3.8 4.8 L5.6 3" stroke="#d06ac8" stroke-width="0.6" fill="none"/></svg>Compare to Index</div>
<div class="mi" style="top:151.9px">Add Study<span class="ar">▶</span></div>
<div class="mi" style="top:160.3px"><svg class="ic" viewBox="0 0 6 6"><rect x="0.6" y="0.8" width="4.8" height="4.4" fill="#3a8ae0"/><path d="M2.2 2 H3.8 M3 2 V4.2" stroke="#dff" stroke-width="0.6"/></svg>Add Commentary</div>
<div class="mi" style="top:168.7px"><svg class="ic" viewBox="0 0 6 6"><rect x="0.4" y="0.6" width="4.4" height="4.2" fill="#3a8ae0"/><path d="M1.8 1.8 H3.4 M2.6 1.8 V3.8" stroke="#dff" stroke-width="0.6"/><circle cx="4.8" cy="4.8" r="1.1" fill="#d03020"/></svg>Remove All Commentaries</div>
<div class="mi" style="top:177.2px"><svg class="ic" viewBox="0 0 6 6"><path d="M0.8 5.4 L5 0.8" stroke="#d03030" stroke-width="0.9"/><path d="M0.4 5.8 L1.6 5.4 L0.8 4.6 Z" fill="#444"/></svg>Modify or Remove<span class="ar">▶</span></div>
<div class="mi" style="top:186.0px"><svg class="ic" viewBox="0 0 6 6"><circle cx="3" cy="3" r="2.5" fill="#2aa82a" stroke="#1a7a1a" stroke-width="0.5"/><path d="M3 1.4 V3 L4 3.8" stroke="#fff" stroke-width="0.6" fill="none"/></svg>Time &amp; Sales</div>
<div class="mi" style="top:194.6px"><svg class="ic" viewBox="0 0 6 6"><path d="M0.2 5.6 V4 L1.6 2.6 L2.8 3.6 L3.8 1.4 L5.8 4.2 V5.6 Z" fill="#2a7ae0"/></svg>Show/Hide Volume</div>
<div class="sep" style="top:74.0px"></div>
<div class="sep" style="top:91.3px"></div>
<div class="sep" style="top:108.8px"></div>
<div class="sep" style="top:117.1px"></div>
<div class="sep" style="top:134.3px"></div>
<div class="sep" style="top:185.3px"></div>
<div class="sep" style="top:194.1px"></div>
</div>
</div></body></html>
